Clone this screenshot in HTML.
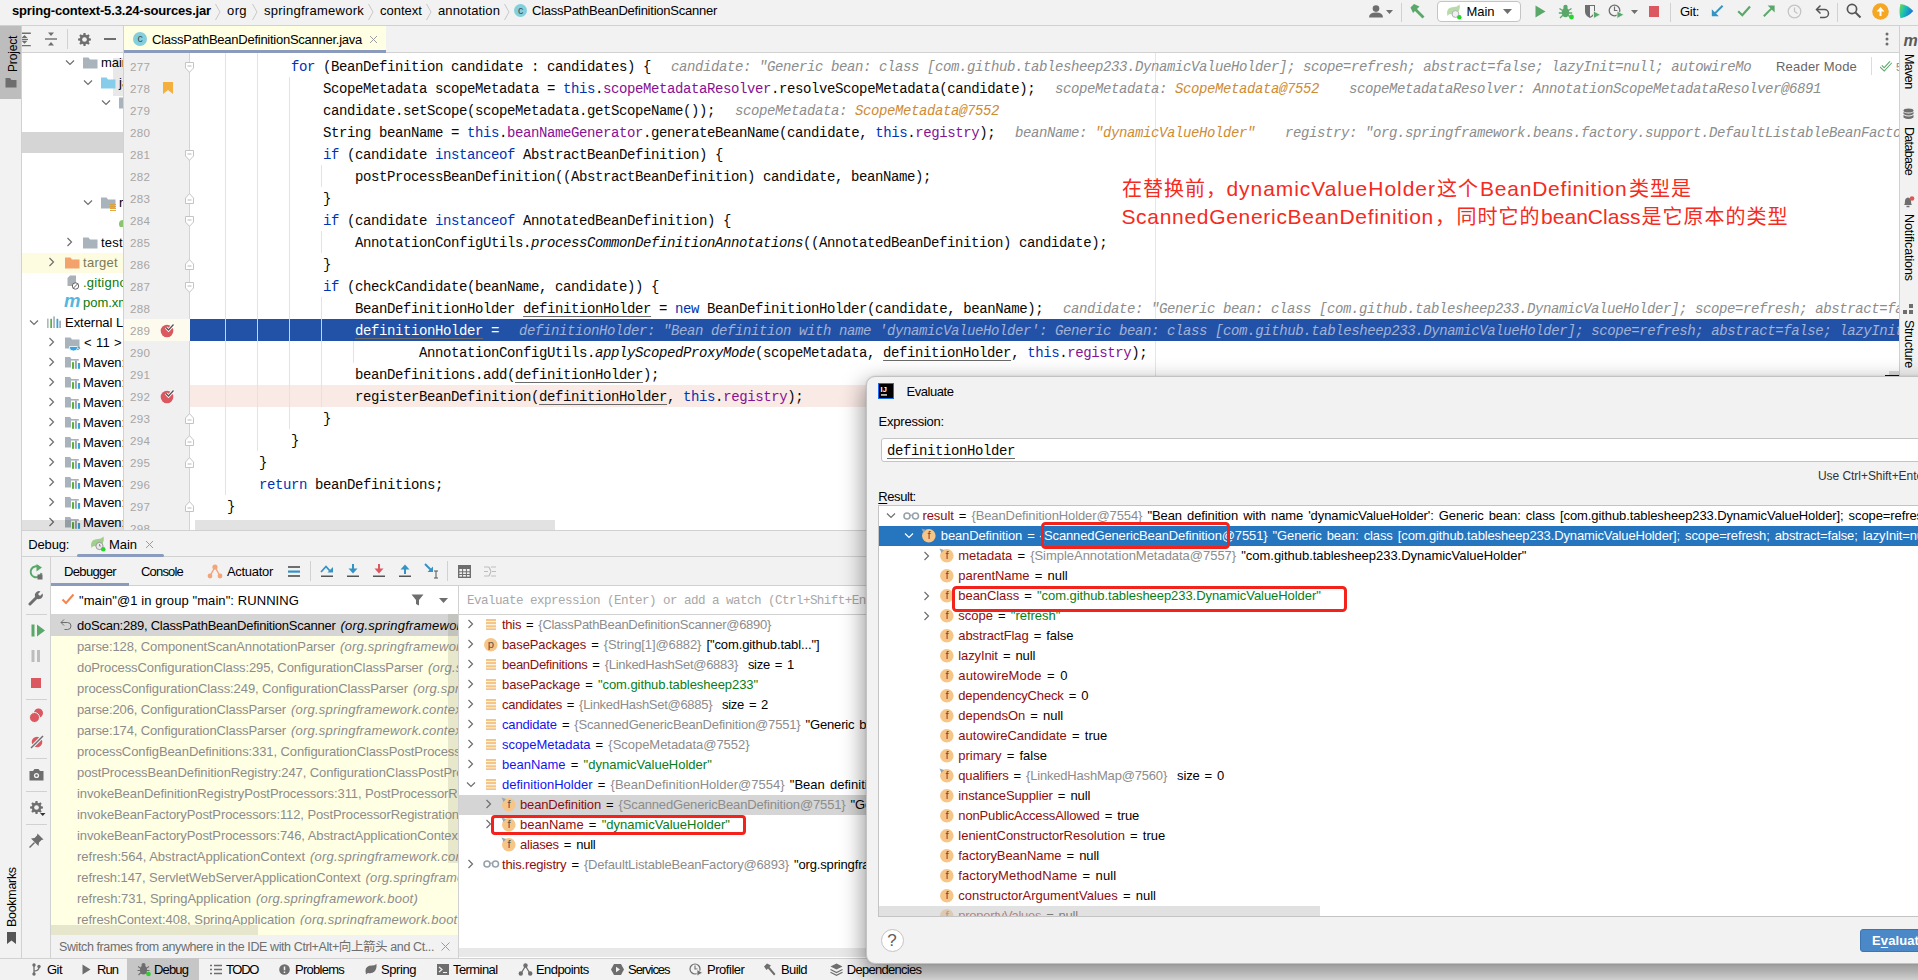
<!DOCTYPE html>
<html><head><meta charset="utf-8"><title>IDE</title>
<style>
html,body{margin:0;padding:0}
body{width:1918px;height:980px;overflow:hidden;position:relative;background:#f2f2f2;font-family:'Liberation Sans','Noto Sans CJK SC',sans-serif;font-size:13px;color:#000}
.t{position:absolute;white-space:pre;overflow:visible}
.b{position:absolute;box-sizing:border-box}
.c{position:absolute;overflow:hidden}
.cd{height:22px;line-height:22px;font-family:'Liberation Mono','Noto Sans CJK SC',monospace;font-size:14px;letter-spacing:-0.4px;color:#080808}
.ln{height:22px;line-height:22px;font-family:'Liberation Sans',sans-serif;font-size:11.6px;letter-spacing:0.25px;color:#a6a6a6}
.k{color:#0033b3}.f{color:#871094}.h{color:#8c8c8c;font-style:italic}.o{color:#cf8b31;font-style:italic}.i{font-style:italic}.u{text-decoration:underline;text-underline-offset:3px;text-decoration-thickness:1px;text-decoration-color:#6a6a6a}
.g{color:#8c8c8c}.n{color:#8d0d0d}.bl{color:#1414f0}.s{color:#067d17}
</style></head><body>
<div class="b" style="left:0px;top:0px;width:1918px;height:26px;background:#f2f2f2;border-bottom:1px solid #d1d1d1;"></div>
<div class="t" style="left:12px;top:1px;height:20px;line-height:20px;font-size:13px;color:#000;font-weight:bold;letter-spacing:-0.166px;">spring-context-5.3.24-sources.jar</div>
<svg class="b" style="left:214px;top:3px;" width="8" height="18" viewBox="0 0 8 18"><path d="M1.5 1 L6 9 L1.5 17" fill="none" stroke="#c8c8c8" stroke-width="1"/></svg>
<svg class="b" style="left:251px;top:3px;" width="8" height="18" viewBox="0 0 8 18"><path d="M1.5 1 L6 9 L1.5 17" fill="none" stroke="#c8c8c8" stroke-width="1"/></svg>
<svg class="b" style="left:367px;top:3px;" width="8" height="18" viewBox="0 0 8 18"><path d="M1.5 1 L6 9 L1.5 17" fill="none" stroke="#c8c8c8" stroke-width="1"/></svg>
<svg class="b" style="left:425px;top:3px;" width="8" height="18" viewBox="0 0 8 18"><path d="M1.5 1 L6 9 L1.5 17" fill="none" stroke="#c8c8c8" stroke-width="1"/></svg>
<svg class="b" style="left:502.5px;top:3px;" width="8" height="18" viewBox="0 0 8 18"><path d="M1.5 1 L6 9 L1.5 17" fill="none" stroke="#c8c8c8" stroke-width="1"/></svg>
<div class="t" style="left:227px;top:1px;height:20px;line-height:20px;font-size:13px;color:#000;letter-spacing:0.401px;">org</div>
<div class="t" style="left:264px;top:1px;height:20px;line-height:20px;font-size:13px;color:#000;letter-spacing:0.260px;">springframework</div>
<div class="t" style="left:380px;top:1px;height:20px;line-height:20px;font-size:13px;color:#000;letter-spacing:0.011px;">context</div>
<div class="t" style="left:438px;top:1px;height:20px;line-height:20px;font-size:13px;color:#000;letter-spacing:0.127px;">annotation</div>
<div class="t" style="left:532px;top:1px;height:20px;line-height:20px;font-size:13px;color:#000;letter-spacing:-0.241px;">ClassPathBeanDefinitionScanner</div>
<svg class="b" style="left:514px;top:4.2px;" width="13" height="13" viewBox="0 0 13 13"><circle cx="6.5" cy="6.5" r="6.5" fill="#84cfdc"/><text x="6.5" y="9.5" font-family="Liberation Sans,sans-serif" font-size="10.5" text-anchor="middle" fill="#3c4a50">c</text></svg>
<div class="b" style="left:0px;top:26px;width:22px;height:933px;background:#f2f2f2;border-right:1px solid #d1d1d1;"></div>
<div class="b" style="left:0px;top:26px;width:21px;height:73px;background:#bdbdbd;"></div>
<div class="t" style="left:0;top:26px;width:21px;height:73px;"><div style="position:absolute;left:2.5px;top:45.5px;transform-origin:0 0;transform:rotate(-90deg);font-size:12px;line-height:21px;width:50px;letter-spacing:-0.15px">Project</div></div>
<svg class="b" style="left:5px;top:77px;" width="12" height="11" viewBox="0 0 12 11"><path d="M0.5 1 H5 L6.5 3 H11.5 V10.5 H0.5 Z" fill="#6e6e6e"/></svg>
<div class="t" style="left:0;top:860px;width:21px;height:80px;"><div style="position:absolute;left:2px;top:67px;transform-origin:0 0;transform:rotate(-90deg);font-size:12.5px;line-height:21px;letter-spacing:-0.3px">Bookmarks</div></div>
<svg class="b" style="left:7px;top:932px;" width="9" height="12" viewBox="0 0 9 12"><path d="M0 0 H9 V12 L4.5 8.5 L0 12 Z" fill="#555"/></svg>
<div class="b" style="left:22px;top:26px;width:102px;height:27px;background:#f2f2f2;border-bottom:1px solid #d1d1d1;"></div>
<div class="b" style="left:22px;top:53px;width:102px;height:477px;background:#fff;"></div>
<svg class="b" style="left:22px;top:31px;" width="10" height="16" viewBox="0 0 10 16"><path d="M0 2.2 H8.8 M0 14.6 H8.8" fill="none" stroke="#6e6e6e" stroke-width="1.4"/><path d="M0 8.4 H6" stroke="#6e6e6e" stroke-width="1.2"/><path d="M-0.5 7 L2.5 4 L5.5 7 Z M-0.5 9.8 L2.5 12.8 L5.5 9.8 Z" fill="#6e6e6e"/></svg>
<svg class="b" style="left:44px;top:31px;" width="14" height="16" viewBox="0 0 14 16"><path d="M1 8 H13" stroke="#6e6e6e" stroke-width="1.4"/><path d="M4 1.5 H10 L7 5 Z M4 14.5 H10 L7 11 Z" fill="#6e6e6e"/></svg>
<div class="b" style="left:67px;top:29px;width:1px;height:20px;background:#d1d1d1;"></div>
<svg class="b" style="left:76.5px;top:31.5px;" width="15" height="15" viewBox="0 0 15 15"><polygon points="13.92,6.46 13.92,8.54 12.16,8.69 11.64,9.95 12.77,11.31 11.31,12.77 9.95,11.64 8.69,12.16 8.54,13.92 6.46,13.92 6.31,12.16 5.05,11.64 3.69,12.77 2.23,11.31 3.36,9.95 2.84,8.69 1.08,8.54 1.08,6.46 2.84,6.31 3.36,5.05 2.23,3.69 3.69,2.23 5.05,3.36 6.31,2.84 6.46,1.08 8.54,1.08 8.69,2.84 9.95,3.36 11.31,2.23 12.77,3.69 11.64,5.05 12.16,6.31" fill="#6e6e6e"/><circle cx="7.5" cy="7.5" r="2.34" fill="#f2f2f2"/></svg>
<div class="b" style="left:104px;top:38px;width:12px;height:2px;background:#6e6e6e;"></div>
<div class="c" style="left:22px;top:53px;width:101px;height:477px">
<div class="b" style="left:0px;top:79px;width:101px;height:21px;background:#d5d5d5;"></div>
<div class="b" style="left:0px;top:200px;width:101px;height:20px;background:#fdfbe0;"></div>
<div class="b" style="left:91px;top:5px;width:10px;height:38px;background:#e8e8e8;"></div>
<svg class="b" style="left:43px;top:5.5px;" width="10" height="7" viewBox="0 0 10 7"><path d="M1 1.5 L5 5.5 L9 1.5" fill="none" stroke="#6e6e6e" stroke-width="1.2"/></svg>
<svg class="b" style="left:61px;top:3.75px;" width="15" height="12" viewBox="0 0 15 12"><path d="M0 0.5 H5.5 L7 2.5 H14.5 V11.5 H0 Z" fill="#a8b3bb"/></svg>
<div class="t" style="left:79px;top:-0.25px;height:20px;line-height:20px;font-size:13px;color:#000;letter-spacing:-0.047px;">main</div>
<svg class="b" style="left:61px;top:25.5px;" width="10" height="7" viewBox="0 0 10 7"><path d="M1 1.5 L5 5.5 L9 1.5" fill="none" stroke="#6e6e6e" stroke-width="1.2"/></svg>
<svg class="b" style="left:79px;top:23.75px;" width="15" height="12" viewBox="0 0 15 12"><path d="M0 0.5 H5.5 L7 2.5 H14.5 V11.5 H0 Z" fill="#87cdea"/></svg>
<div class="t" style="left:97px;top:19.75px;height:20px;line-height:20px;font-size:13px;color:#000;">java</div>
<svg class="b" style="left:79px;top:45.5px;" width="10" height="7" viewBox="0 0 10 7"><path d="M1 1.5 L5 5.5 L9 1.5" fill="none" stroke="#6e6e6e" stroke-width="1.2"/></svg>
<svg class="b" style="left:97px;top:43.75px;" width="15" height="12" viewBox="0 0 15 12"><path d="M0 0.5 H5.5 L7 2.5 H14.5 V11.5 H0 Z" fill="#a8b3bb"/></svg>
<svg class="b" style="left:61px;top:145.5px;" width="10" height="7" viewBox="0 0 10 7"><path d="M1 1.5 L5 5.5 L9 1.5" fill="none" stroke="#6e6e6e" stroke-width="1.2"/></svg>
<svg class="b" style="left:79px;top:143.75px;" width="15" height="12" viewBox="0 0 15 12"><path d="M0 0.5 H5.5 L7 2.5 H14.5 V11.5 H0 Z" fill="#a8b3bb"/></svg>
<svg class="b" style="left:87px;top:150px;" width="8" height="8" viewBox="0 0 8 8"><path d="M1 1.5 H7 M1 3.5 H7 M1 5.5 H7 M1 7.5 H7" stroke="#e0a030" stroke-width="0.9"/></svg>
<div class="t" style="left:97px;top:139.75px;height:20px;line-height:20px;font-size:13px;color:#000;">resources</div>
<svg class="b" style="left:96px;top:166px;" width="8" height="8" viewBox="0 0 8 8"><circle cx="5" cy="5" r="4" fill="#8bc46a"/></svg>
<svg class="b" style="left:44px;top:184px;" width="7" height="10" viewBox="0 0 7 10"><path d="M1.5 1 L5.5 5 L1.5 9" fill="none" stroke="#6e6e6e" stroke-width="1.2"/></svg>
<svg class="b" style="left:61px;top:183.75px;" width="15" height="12" viewBox="0 0 15 12"><path d="M0 0.5 H5.5 L7 2.5 H14.5 V11.5 H0 Z" fill="#a8b3bb"/></svg>
<div class="t" style="left:79px;top:179.75px;height:20px;line-height:20px;font-size:13px;color:#000;letter-spacing:0.258px;">test</div>
<svg class="b" style="left:26px;top:204px;" width="7" height="10" viewBox="0 0 7 10"><path d="M1.5 1 L5.5 5 L1.5 9" fill="none" stroke="#6e6e6e" stroke-width="1.2"/></svg>
<svg class="b" style="left:43px;top:203.75px;" width="15" height="12" viewBox="0 0 15 12"><path d="M0 0.5 H5.5 L7 2.5 H14.5 V11.5 H0 Z" fill="#f4a26c"/></svg>
<div class="t" style="left:61px;top:199.75px;height:20px;line-height:20px;font-size:13px;color:#7a7a55;letter-spacing:0.292px;">target</div>
<svg class="b" style="left:45px;top:222px;" width="13" height="15" viewBox="0 0 13 15"><path d="M3 0.5 H9 V11 H0.5 V3 Z" fill="#aab2b8"/><circle cx="8.5" cy="11" r="3.2" fill="#fff" stroke="#555" stroke-width="0.9"/><path d="M6.3 13.2 L10.7 8.8" stroke="#555" stroke-width="0.9"/></svg>
<div class="t" style="left:61px;top:219.75px;height:20px;line-height:20px;font-size:13px;color:#0a7a0a;letter-spacing:0.252px;">.gitignore</div>
<div class="t" style="left:42px;top:238.25px;height:20px;line-height:20px;font-size:18.5px;color:#52b6de;font-weight:bold;font-style:italic;">m</div>
<div class="t" style="left:61px;top:239.75px;height:20px;line-height:20px;font-size:13px;color:#0a7a0a;letter-spacing:-0.018px;">pom.xml</div>
<svg class="b" style="left:7px;top:265.5px;" width="10" height="7" viewBox="0 0 10 7"><path d="M1 1.5 L5 5.5 L9 1.5" fill="none" stroke="#6e6e6e" stroke-width="1.2"/></svg>
<svg class="b" style="left:25px;top:262.5px;" width="15" height="12.5" viewBox="0 0 15 12.5"><rect x="0.2" y="2.6" width="1.3" height="9.4" fill="#9aa7b0"/><rect x="3.3" y="2.8" width="1.7" height="9.2" fill="#5fad3a"/><rect x="6.3" y="0.4" width="1.5" height="11.6" fill="#9aa7b0"/><rect x="9.5" y="2.8" width="1.8" height="9.2" fill="#35a5dd"/><rect x="12.3" y="4.7" width="1.6" height="7.3" fill="#9aa7b0"/></svg>
<div class="t" style="left:43px;top:259.75px;height:20px;line-height:20px;font-size:13px;color:#000;letter-spacing:-0.036px;">External Libraries</div>
<svg class="b" style="left:26px;top:284px;" width="7" height="10" viewBox="0 0 7 10"><path d="M1.5 1 L5.5 5 L1.5 9" fill="none" stroke="#6e6e6e" stroke-width="1.2"/></svg>
<svg class="b" style="left:43px;top:283.75px;" width="15" height="12" viewBox="0 0 15 12"><path d="M0 0.5 H5.5 L7 2.5 H14.5 V11.5 H0 Z" fill="#a8b3bb"/></svg>
<svg class="b" style="left:46.5px;top:292.5px;" width="12" height="5.5" viewBox="0 0 12 5.5"><path d="M0.5 0.5 H8.5 V2 Q8.5 5 4.5 5 Q0.5 5 0.5 2 Z" fill="#35a5dd" stroke="#fff" stroke-width="0.8"/><path d="M8.5 1.2 Q11.3 1 10.8 2.4 Q10.3 3.6 8 3.4" fill="none" stroke="#35a5dd" stroke-width="1"/></svg>
<div class="t" style="left:62px;top:279.75px;height:20px;line-height:20px;font-size:13px;color:#000;letter-spacing:0.349px;">&lt; 11 &gt;</div>
<svg class="b" style="left:26px;top:304px;" width="7" height="10" viewBox="0 0 7 10"><path d="M1.5 1 L5.5 5 L1.5 9" fill="none" stroke="#6e6e6e" stroke-width="1.2"/></svg>
<svg class="b" style="left:43px;top:303px;" width="16" height="14" viewBox="0 0 16 14"><path d="M0 1 H5 L6.5 3 H13.8 V11.6 H0 Z" fill="#a8b3bb"/><rect x="6" y="4.6" width="10" height="9.4" fill="#fff"/><rect x="7" y="6.2" width="2.1" height="6.6" fill="#5fad3a"/><rect x="10" y="4.6" width="1.9" height="8.2" fill="#9aa7b0"/><rect x="12.9" y="7" width="2.2" height="5.8" fill="#35a5dd"/></svg>
<div class="t" style="left:61px;top:299.75px;height:20px;line-height:20px;font-size:13px;color:#000;letter-spacing:-0.107px;">Maven:</div>
<svg class="b" style="left:26px;top:324px;" width="7" height="10" viewBox="0 0 7 10"><path d="M1.5 1 L5.5 5 L1.5 9" fill="none" stroke="#6e6e6e" stroke-width="1.2"/></svg>
<svg class="b" style="left:43px;top:323px;" width="16" height="14" viewBox="0 0 16 14"><path d="M0 1 H5 L6.5 3 H13.8 V11.6 H0 Z" fill="#a8b3bb"/><rect x="6" y="4.6" width="10" height="9.4" fill="#fff"/><rect x="7" y="6.2" width="2.1" height="6.6" fill="#5fad3a"/><rect x="10" y="4.6" width="1.9" height="8.2" fill="#9aa7b0"/><rect x="12.9" y="7" width="2.2" height="5.8" fill="#35a5dd"/></svg>
<div class="t" style="left:61px;top:319.75px;height:20px;line-height:20px;font-size:13px;color:#000;letter-spacing:-0.107px;">Maven:</div>
<svg class="b" style="left:26px;top:344px;" width="7" height="10" viewBox="0 0 7 10"><path d="M1.5 1 L5.5 5 L1.5 9" fill="none" stroke="#6e6e6e" stroke-width="1.2"/></svg>
<svg class="b" style="left:43px;top:343px;" width="16" height="14" viewBox="0 0 16 14"><path d="M0 1 H5 L6.5 3 H13.8 V11.6 H0 Z" fill="#a8b3bb"/><rect x="6" y="4.6" width="10" height="9.4" fill="#fff"/><rect x="7" y="6.2" width="2.1" height="6.6" fill="#5fad3a"/><rect x="10" y="4.6" width="1.9" height="8.2" fill="#9aa7b0"/><rect x="12.9" y="7" width="2.2" height="5.8" fill="#35a5dd"/></svg>
<div class="t" style="left:61px;top:339.75px;height:20px;line-height:20px;font-size:13px;color:#000;letter-spacing:-0.107px;">Maven:</div>
<svg class="b" style="left:26px;top:364px;" width="7" height="10" viewBox="0 0 7 10"><path d="M1.5 1 L5.5 5 L1.5 9" fill="none" stroke="#6e6e6e" stroke-width="1.2"/></svg>
<svg class="b" style="left:43px;top:363px;" width="16" height="14" viewBox="0 0 16 14"><path d="M0 1 H5 L6.5 3 H13.8 V11.6 H0 Z" fill="#a8b3bb"/><rect x="6" y="4.6" width="10" height="9.4" fill="#fff"/><rect x="7" y="6.2" width="2.1" height="6.6" fill="#5fad3a"/><rect x="10" y="4.6" width="1.9" height="8.2" fill="#9aa7b0"/><rect x="12.9" y="7" width="2.2" height="5.8" fill="#35a5dd"/></svg>
<div class="t" style="left:61px;top:359.75px;height:20px;line-height:20px;font-size:13px;color:#000;letter-spacing:-0.107px;">Maven:</div>
<svg class="b" style="left:26px;top:384px;" width="7" height="10" viewBox="0 0 7 10"><path d="M1.5 1 L5.5 5 L1.5 9" fill="none" stroke="#6e6e6e" stroke-width="1.2"/></svg>
<svg class="b" style="left:43px;top:383px;" width="16" height="14" viewBox="0 0 16 14"><path d="M0 1 H5 L6.5 3 H13.8 V11.6 H0 Z" fill="#a8b3bb"/><rect x="6" y="4.6" width="10" height="9.4" fill="#fff"/><rect x="7" y="6.2" width="2.1" height="6.6" fill="#5fad3a"/><rect x="10" y="4.6" width="1.9" height="8.2" fill="#9aa7b0"/><rect x="12.9" y="7" width="2.2" height="5.8" fill="#35a5dd"/></svg>
<div class="t" style="left:61px;top:379.75px;height:20px;line-height:20px;font-size:13px;color:#000;letter-spacing:-0.107px;">Maven:</div>
<svg class="b" style="left:26px;top:404px;" width="7" height="10" viewBox="0 0 7 10"><path d="M1.5 1 L5.5 5 L1.5 9" fill="none" stroke="#6e6e6e" stroke-width="1.2"/></svg>
<svg class="b" style="left:43px;top:403px;" width="16" height="14" viewBox="0 0 16 14"><path d="M0 1 H5 L6.5 3 H13.8 V11.6 H0 Z" fill="#a8b3bb"/><rect x="6" y="4.6" width="10" height="9.4" fill="#fff"/><rect x="7" y="6.2" width="2.1" height="6.6" fill="#5fad3a"/><rect x="10" y="4.6" width="1.9" height="8.2" fill="#9aa7b0"/><rect x="12.9" y="7" width="2.2" height="5.8" fill="#35a5dd"/></svg>
<div class="t" style="left:61px;top:399.75px;height:20px;line-height:20px;font-size:13px;color:#000;letter-spacing:-0.107px;">Maven:</div>
<svg class="b" style="left:26px;top:424px;" width="7" height="10" viewBox="0 0 7 10"><path d="M1.5 1 L5.5 5 L1.5 9" fill="none" stroke="#6e6e6e" stroke-width="1.2"/></svg>
<svg class="b" style="left:43px;top:423px;" width="16" height="14" viewBox="0 0 16 14"><path d="M0 1 H5 L6.5 3 H13.8 V11.6 H0 Z" fill="#a8b3bb"/><rect x="6" y="4.6" width="10" height="9.4" fill="#fff"/><rect x="7" y="6.2" width="2.1" height="6.6" fill="#5fad3a"/><rect x="10" y="4.6" width="1.9" height="8.2" fill="#9aa7b0"/><rect x="12.9" y="7" width="2.2" height="5.8" fill="#35a5dd"/></svg>
<div class="t" style="left:61px;top:419.75px;height:20px;line-height:20px;font-size:13px;color:#000;letter-spacing:-0.107px;">Maven:</div>
<svg class="b" style="left:26px;top:444px;" width="7" height="10" viewBox="0 0 7 10"><path d="M1.5 1 L5.5 5 L1.5 9" fill="none" stroke="#6e6e6e" stroke-width="1.2"/></svg>
<svg class="b" style="left:43px;top:443px;" width="16" height="14" viewBox="0 0 16 14"><path d="M0 1 H5 L6.5 3 H13.8 V11.6 H0 Z" fill="#a8b3bb"/><rect x="6" y="4.6" width="10" height="9.4" fill="#fff"/><rect x="7" y="6.2" width="2.1" height="6.6" fill="#5fad3a"/><rect x="10" y="4.6" width="1.9" height="8.2" fill="#9aa7b0"/><rect x="12.9" y="7" width="2.2" height="5.8" fill="#35a5dd"/></svg>
<div class="t" style="left:61px;top:439.75px;height:20px;line-height:20px;font-size:13px;color:#000;letter-spacing:-0.107px;">Maven:</div>
<svg class="b" style="left:26px;top:464px;" width="7" height="10" viewBox="0 0 7 10"><path d="M1.5 1 L5.5 5 L1.5 9" fill="none" stroke="#6e6e6e" stroke-width="1.2"/></svg>
<svg class="b" style="left:43px;top:463px;" width="16" height="14" viewBox="0 0 16 14"><path d="M0 1 H5 L6.5 3 H13.8 V11.6 H0 Z" fill="#a8b3bb"/><rect x="6" y="4.6" width="10" height="9.4" fill="#fff"/><rect x="7" y="6.2" width="2.1" height="6.6" fill="#5fad3a"/><rect x="10" y="4.6" width="1.9" height="8.2" fill="#9aa7b0"/><rect x="12.9" y="7" width="2.2" height="5.8" fill="#35a5dd"/></svg>
<div class="t" style="left:61px;top:459.75px;height:20px;line-height:20px;font-size:13px;color:#000;letter-spacing:-0.107px;">Maven:</div>
<div class="b" style="left:0px;top:467px;width:101px;height:10.5px;background:rgba(0,0,0,0.12);"></div>
</div>
<div class="b" style="left:123px;top:26px;width:1px;height:504px;background:#d1d1d1;"></div>
<div class="b" style="left:124px;top:26px;width:1775px;height:27px;background:#f2f2f2;border-bottom:1px solid #d1d1d1;"></div>
<div class="b" style="left:124px;top:26px;width:262px;height:24px;background:#ffffe4;"></div>
<div class="b" style="left:124px;top:50px;width:262px;height:3px;background:#8b9bbd;"></div>
<svg class="b" style="left:133px;top:32px;" width="14" height="14" viewBox="0 0 14 14"><circle cx="7" cy="7" r="7" fill="#84cfdc"/><text x="7" y="10" font-family="Liberation Sans,sans-serif" font-size="10.5" text-anchor="middle" fill="#3c4a50">c</text></svg>
<div class="t" style="left:152px;top:29.75px;height:20px;line-height:20px;font-size:13px;color:#000;letter-spacing:-0.256px;">ClassPathBeanDefinitionScanner.java</div>
<svg class="b" style="left:369px;top:35px;" width="9" height="9" viewBox="0 0 9 9"><path d="M1 1 L8 8 M8 1 L1 8" stroke="#9b9b9b" stroke-width="1"/></svg>
<svg class="b" style="left:1885px;top:32px;" width="4" height="14" viewBox="0 0 4 14"><circle cx="2" cy="2" r="1.5" fill="#6e6e6e"/><circle cx="2" cy="7" r="1.5" fill="#6e6e6e"/><circle cx="2" cy="12" r="1.5" fill="#6e6e6e"/></svg>
<div class="c" style="left:124px;top:53px;width:1775px;height:477px;background:#fff">
<div class="b" style="left:0px;top:0px;width:66px;height:477px;background:#f0f0f0;"></div>
<div class="b" style="left:65px;top:0px;width:1px;height:477px;background:#d4d4d4;"></div>
<div class="b" style="left:1031px;top:0px;width:1px;height:477px;background:#e6e6e6;"></div>
<div class="b" style="left:0px;top:266px;width:66px;height:22px;background:#fdfbee;"></div>
<div class="b" style="left:66px;top:266px;width:1709px;height:22px;background:#2252a8;"></div>
<div class="b" style="left:66px;top:332px;width:1709px;height:22px;background:#faeae6;"></div>
<div class="b" style="left:101px;top:0px;width:1px;height:442px;background:#e3e3e3;"></div>
<div class="b" style="left:133px;top:0px;width:1px;height:398px;background:#e3e3e3;"></div>
<div class="b" style="left:165px;top:24px;width:1px;height:352px;background:#e3e3e3;"></div>
<div class="b" style="left:197px;top:112px;width:1px;height:242px;background:#e3e3e3;"></div>
<div class="b" style="left:197px;top:178px;width:1px;height:22px;background:#e3e3e3;"></div>
<div class="b" style="left:229px;top:288px;width:1px;height:22px;background:#e3e3e3;"></div>
<div class="b" style="left:101px;top:266px;width:1px;height:22px;background:#c9d3e8;"></div>
<div class="b" style="left:133px;top:266px;width:1px;height:22px;background:#c9d3e8;"></div>
<div class="b" style="left:165px;top:266px;width:1px;height:22px;background:#c9d3e8;"></div>
<div class="b" style="left:197px;top:266px;width:1px;height:22px;background:#c9d3e8;"></div>
<div class="b" style="left:197px;top:134px;width:1px;height:22px;background:#fff;"></div>
<div class="b" style="left:197px;top:156px;width:1px;height:22px;background:#fff;"></div>
<div class="b" style="left:197px;top:200px;width:1px;height:22px;background:#fff;"></div>
<div class="b" style="left:197px;top:222px;width:1px;height:22px;background:#fff;"></div>
<div class="t cd" style="left:167px;top:3px;"><span class="k">for</span> (BeanDefinition candidate : candidates) {</div>
<div class="t cd h" style="left:547px;top:3px;">candidate: "Generic bean: class [com.github.tablesheep233.DynamicValueHolder]; scope=refresh; abstract=false; lazyInit=null; autowireMo</div>
<div class="t cd" style="left:199px;top:25px;">ScopeMetadata scopeMetadata = <span class="k">this</span>.<span class="f">scopeMetadataResolver</span>.resolveScopeMetadata(candidate);</div>
<div class="t cd h" style="left:931px;top:25px;">scopeMetadata: <span class="o">ScopeMetadata@7552</span></div>
<div class="t cd h" style="left:1225px;top:25px;">scopeMetadataResolver: AnnotationScopeMetadataResolver@6891</div>
<div class="t cd" style="left:199px;top:47px;">candidate.setScope(scopeMetadata.getScopeName());</div>
<div class="t cd h" style="left:611px;top:47px;">scopeMetadata: <span class="o">ScopeMetadata@7552</span></div>
<div class="t cd" style="left:199px;top:69px;">String beanName = <span class="k">this</span>.<span class="f">beanNameGenerator</span>.generateBeanName(candidate, <span class="k">this</span>.<span class="f">registry</span>);</div>
<div class="t cd h" style="left:891px;top:69px;">beanName: <span class="o">"dynamicValueHolder"</span></div>
<div class="t cd h" style="left:1161px;top:69px;">registry: "org.springframework.beans.factory.support.DefaultListableBeanFactory@6893</div>
<div class="t cd" style="left:199px;top:91px;"><span class="k">if</span> (candidate <span class="k">instanceof</span> AbstractBeanDefinition) {</div>
<div class="t cd" style="left:231px;top:113px;">postProcessBeanDefinition((AbstractBeanDefinition) candidate, beanName);</div>
<div class="t cd" style="left:199px;top:135px;">}</div>
<div class="t cd" style="left:199px;top:157px;"><span class="k">if</span> (candidate <span class="k">instanceof</span> AnnotatedBeanDefinition) {</div>
<div class="t cd" style="left:231px;top:179px;">AnnotationConfigUtils.<span class="i">processCommonDefinitionAnnotations</span>((AnnotatedBeanDefinition) candidate);</div>
<div class="t cd" style="left:199px;top:201px;">}</div>
<div class="t cd" style="left:199px;top:223px;"><span class="k">if</span> (checkCandidate(beanName, candidate)) {</div>
<div class="t cd" style="left:231px;top:245px;">BeanDefinitionHolder <span class="u">definitionHolder</span> = <span class="k">new</span> BeanDefinitionHolder(candidate, beanName);</div>
<div class="t cd h" style="left:939px;top:245px;">candidate: "Generic bean: class [com.github.tablesheep233.DynamicValueHolder]; scope=refresh; abstract=false; lazyInit=null</div>
<div class="t cd" style="left:231px;top:267px;"><span style="color:#fff"><span class="u">definitionHolder</span> =</span></div>
<div class="t cd h" style="left:395px;top:267px;"><span style="color:#a3b3d6">definitionHolder: "Bean definition with name 'dynamicValueHolder': Generic bean: class [com.github.tablesheep233.DynamicValueHolder]; scope=refresh; abstract=false; lazyInit=null; autowireMode=0</span></div>
<div class="t cd" style="left:295px;top:289px;">AnnotationConfigUtils.<span class="i">applyScopedProxyMode</span>(scopeMetadata, <span class="u">definitionHolder</span>, <span class="k">this</span>.<span class="f">registry</span>);</div>
<div class="t cd" style="left:231px;top:311px;">beanDefinitions.add(<span class="u">definitionHolder</span>);</div>
<div class="t cd" style="left:231px;top:333px;">registerBeanDefinition(<span class="u">definitionHolder</span>, <span class="k">this</span>.<span class="f">registry</span>);</div>
<div class="t cd" style="left:199px;top:355px;">}</div>
<div class="t cd" style="left:167px;top:377px;">}</div>
<div class="t cd" style="left:135px;top:399px;">}</div>
<div class="t cd" style="left:135px;top:421px;"><span class="k">return</span> beanDefinitions;</div>
<div class="t cd" style="left:103px;top:443px;">}</div>
<div class="t ln" style="left:6px;top:3px;">277</div>
<div class="t ln" style="left:6px;top:25px;">278</div>
<div class="t ln" style="left:6px;top:47px;">279</div>
<div class="t ln" style="left:6px;top:69px;">280</div>
<div class="t ln" style="left:6px;top:91px;">281</div>
<div class="t ln" style="left:6px;top:113px;">282</div>
<div class="t ln" style="left:6px;top:135px;">283</div>
<div class="t ln" style="left:6px;top:157px;">284</div>
<div class="t ln" style="left:6px;top:179px;">285</div>
<div class="t ln" style="left:6px;top:201px;">286</div>
<div class="t ln" style="left:6px;top:223px;">287</div>
<div class="t ln" style="left:6px;top:245px;">288</div>
<div class="t ln" style="left:6px;top:267px;">289</div>
<div class="t ln" style="left:6px;top:289px;">290</div>
<div class="t ln" style="left:6px;top:311px;">291</div>
<div class="t ln" style="left:6px;top:333px;">292</div>
<div class="t ln" style="left:6px;top:355px;">293</div>
<div class="t ln" style="left:6px;top:377px;">294</div>
<div class="t ln" style="left:6px;top:399px;">295</div>
<div class="t ln" style="left:6px;top:421px;">296</div>
<div class="t ln" style="left:6px;top:443px;">297</div>
<div class="t ln" style="left:6px;top:465px;">298</div>
<svg class="b" style="left:61px;top:9px;" width="9" height="11" viewBox="0 0 9 11"><path d="M0.5 0.5 H8.5 V6 L4.5 10.3 L0.5 6 Z" fill="#fff" stroke="#c4c4c4" stroke-width="1"/><path d="M2.5 4 H6.5" stroke="#b8b8b8" stroke-width="1"/></svg>
<svg class="b" style="left:61px;top:97px;" width="9" height="11" viewBox="0 0 9 11"><path d="M0.5 0.5 H8.5 V6 L4.5 10.3 L0.5 6 Z" fill="#fff" stroke="#c4c4c4" stroke-width="1"/><path d="M2.5 4 H6.5" stroke="#b8b8b8" stroke-width="1"/></svg>
<svg class="b" style="left:61px;top:163px;" width="9" height="11" viewBox="0 0 9 11"><path d="M0.5 0.5 H8.5 V6 L4.5 10.3 L0.5 6 Z" fill="#fff" stroke="#c4c4c4" stroke-width="1"/><path d="M2.5 4 H6.5" stroke="#b8b8b8" stroke-width="1"/></svg>
<svg class="b" style="left:61px;top:229px;" width="9" height="11" viewBox="0 0 9 11"><path d="M0.5 0.5 H8.5 V6 L4.5 10.3 L0.5 6 Z" fill="#fff" stroke="#c4c4c4" stroke-width="1"/><path d="M2.5 4 H6.5" stroke="#b8b8b8" stroke-width="1"/></svg>
<svg class="b" style="left:61px;top:139.5px;" width="9" height="11" viewBox="0 0 9 11"><path d="M0.5 10.5 H8.5 V5 L4.5 0.7 L0.5 5 Z" fill="#fff" stroke="#c4c4c4" stroke-width="1"/><path d="M2.5 7 H6.5" stroke="#b8b8b8" stroke-width="1"/></svg>
<svg class="b" style="left:61px;top:205.5px;" width="9" height="11" viewBox="0 0 9 11"><path d="M0.5 10.5 H8.5 V5 L4.5 0.7 L0.5 5 Z" fill="#fff" stroke="#c4c4c4" stroke-width="1"/><path d="M2.5 7 H6.5" stroke="#b8b8b8" stroke-width="1"/></svg>
<svg class="b" style="left:61px;top:359.5px;" width="9" height="11" viewBox="0 0 9 11"><path d="M0.5 10.5 H8.5 V5 L4.5 0.7 L0.5 5 Z" fill="#fff" stroke="#c4c4c4" stroke-width="1"/><path d="M2.5 7 H6.5" stroke="#b8b8b8" stroke-width="1"/></svg>
<svg class="b" style="left:61px;top:381.5px;" width="9" height="11" viewBox="0 0 9 11"><path d="M0.5 10.5 H8.5 V5 L4.5 0.7 L0.5 5 Z" fill="#fff" stroke="#c4c4c4" stroke-width="1"/><path d="M2.5 7 H6.5" stroke="#b8b8b8" stroke-width="1"/></svg>
<svg class="b" style="left:61px;top:403.5px;" width="9" height="11" viewBox="0 0 9 11"><path d="M0.5 10.5 H8.5 V5 L4.5 0.7 L0.5 5 Z" fill="#fff" stroke="#c4c4c4" stroke-width="1"/><path d="M2.5 7 H6.5" stroke="#b8b8b8" stroke-width="1"/></svg>
<svg class="b" style="left:61px;top:447.5px;" width="9" height="11" viewBox="0 0 9 11"><path d="M0.5 10.5 H8.5 V5 L4.5 0.7 L0.5 5 Z" fill="#fff" stroke="#c4c4c4" stroke-width="1"/><path d="M2.5 7 H6.5" stroke="#b8b8b8" stroke-width="1"/></svg>
<svg class="b" style="left:39px;top:29px;" width="10" height="12" viewBox="0 0 10 12"><path d="M0 0 H10 V12 L5 8 L0 12 Z" fill="#f5af3d"/></svg>
<svg class="b" style="left:36px;top:269px;" width="16" height="16" viewBox="0 0 16 16"><circle cx="7" cy="9" r="6.3" fill="#db5860"/><path d="M6 5.5 L8.5 8 L13.5 2.5" fill="none" stroke="#fff" stroke-width="3"/><path d="M6 5.5 L8.5 8 L13.5 2.5" fill="none" stroke="#555" stroke-width="1.3"/></svg>
<svg class="b" style="left:36px;top:335px;" width="16" height="16" viewBox="0 0 16 16"><circle cx="7" cy="9" r="6.3" fill="#db5860"/><path d="M6 5.5 L8.5 8 L13.5 2.5" fill="none" stroke="#fff" stroke-width="3"/><path d="M6 5.5 L8.5 8 L13.5 2.5" fill="none" stroke="#555" stroke-width="1.3"/></svg>
<div class="b" style="left:1634px;top:2px;width:132px;height:22px;background:#fff;"></div>
<div class="t" style="left:1652px;top:3.75px;height:20px;line-height:20px;font-size:13px;color:#666;letter-spacing:0.202px;">Reader Mode</div>
<div class="b" style="left:1747px;top:4px;width:1px;height:18px;background:#dcdcdc;"></div>
<svg class="b" style="left:1755px;top:7px;" width="14" height="12" viewBox="0 0 14 12"><path d="M2 6.2 L5.2 9.4 L11.8 2.2" fill="none" stroke="#59a869" stroke-width="3.4"/><path d="M2 6.2 L5.2 9.4 L11.8 2.2" fill="none" stroke="#fff" stroke-width="1.3"/></svg>
<div class="t" style="left:1772px;top:3.75px;height:20px;line-height:20px;font-size:11px;color:#8a8a8a;">5</div>
<div class="t" style="left:997.9px;top:121.75px;height:28px;line-height:28px;font-size:20px;color:#f52a20;letter-spacing:1px;">在替换前，</div>
<div class="t" style="left:1102.4px;top:121.75px;height:28px;line-height:28px;font-size:21px;color:#f52a20;letter-spacing:0.960px;">dynamicValueHolder</div>
<div class="t" style="left:1313px;top:121.75px;height:28px;line-height:28px;font-size:20px;color:#f52a20;letter-spacing:1px;">这个</div>
<div class="t" style="left:1356px;top:121.75px;height:28px;line-height:28px;font-size:21px;color:#f52a20;letter-spacing:0.779px;">BeanDefinition</div>
<div class="t" style="left:1505px;top:121.75px;height:28px;line-height:28px;font-size:20px;color:#f52a20;letter-spacing:1px;">类型是</div>
<div class="t" style="left:997.4px;top:149.75px;height:28px;line-height:28px;font-size:21px;color:#f52a20;letter-spacing:0.699px;">ScannedGenericBeanDefinition</div>
<div class="t" style="left:1311px;top:149.75px;height:28px;line-height:28px;font-size:20px;color:#f52a20;letter-spacing:1px;">，</div>
<div class="t" style="left:1332.5px;top:149.75px;height:28px;line-height:28px;font-size:20px;color:#f52a20;letter-spacing:1px;">同时它的</div>
<div class="t" style="left:1417px;top:149.75px;height:28px;line-height:28px;font-size:21px;color:#f52a20;letter-spacing:0.030px;">beanClass</div>
<div class="t" style="left:1517.5px;top:149.75px;height:28px;line-height:28px;font-size:20px;color:#f52a20;letter-spacing:1px;">是它原本的类型</div>
</div>
<div class="b" style="left:195px;top:520px;width:360px;height:10.5px;background:rgba(0,0,0,0.115);"></div>
<div class="b" style="left:1899px;top:26px;width:19px;height:933px;background:#f2f2f2;border-left:1px solid #d1d1d1;"></div>
<div class="t" style="left:1903.5px;top:31.25px;height:20px;line-height:20px;font-size:16px;color:#5a5a5a;font-weight:bold;font-style:italic;">m</div>
<div class="t" style="left:1917.5px;top:53.5px;transform-origin:0 0;transform:rotate(90deg);font-size:12.5px;line-height:19px;height:19px;letter-spacing:-0.606px">Maven</div>
<svg class="b" style="left:1903px;top:108px;" width="11" height="12" viewBox="0 0 11 12"><ellipse cx="5.5" cy="2.5" rx="5" ry="2" fill="#6e6e6e"/><path d="M0.5 4 Q5.5 7 10.5 4 V6 Q5.5 9 0.5 6 Z M0.5 7 Q5.5 10 10.5 7 V9.5 Q5.5 12.5 0.5 9.5 Z" fill="#6e6e6e"/></svg>
<div class="t" style="left:1917.5px;top:126.5px;transform-origin:0 0;transform:rotate(90deg);font-size:12.5px;line-height:19px;height:19px;letter-spacing:-0.689px">Database</div>
<svg class="b" style="left:1902px;top:196px;" width="13" height="13" viewBox="0 0 13 13"><path d="M2 9 Q3 8 3 5 Q3 2 6 1.5 Q9 2 9 5 Q9 8 10 9 Z" fill="#6e6e6e"/><path d="M4.5 10.5 H7.5" stroke="#6e6e6e" stroke-width="1.5"/><circle cx="10" cy="2.5" r="2.3" fill="#e05555"/></svg>
<div class="t" style="left:1917.5px;top:214px;transform-origin:0 0;transform:rotate(90deg);font-size:12.5px;line-height:19px;height:19px;letter-spacing:-0.084px">Notifications</div>
<svg class="b" style="left:1903px;top:304px;" width="11" height="11" viewBox="0 0 11 11"><rect x="6" y="0" width="4" height="4" fill="#6e6e6e"/><rect x="0" y="6" width="4" height="4" fill="#6e6e6e"/><rect x="6" y="6" width="4" height="4" fill="#6e6e6e"/></svg>
<div class="t" style="left:1917.5px;top:320px;transform-origin:0 0;transform:rotate(90deg);font-size:12.5px;line-height:19px;height:19px;letter-spacing:-0.302px">Structure</div>
<div class="b" style="left:22px;top:530px;width:1877px;height:1px;background:#d1d1d1;"></div>
<div class="b" style="left:22px;top:531px;width:1877px;height:26px;background:#f2f2f2;border-bottom:1px solid #d1d1d1;"></div>
<div class="t" style="left:28.3px;top:535.25px;height:20px;line-height:20px;font-size:13px;color:#000;letter-spacing:-0.154px;">Debug:</div>
<div class="b" style="left:77px;top:554px;width:87px;height:3px;background:#8b9bbd;border-radius:1.5px;"></div>
<div class="t" style="left:109px;top:535.25px;height:20px;line-height:20px;font-size:13px;color:#000;letter-spacing:-0.047px;">Main</div>
<svg class="b" style="left:145px;top:540px;" width="9" height="9" viewBox="0 0 9 9"><path d="M1 1 L8 8 M8 1 L1 8" stroke="#9b9b9b" stroke-width="1"/></svg>
<svg class="b" style="left:90px;top:536px;" width="17" height="16" viewBox="0 0 17 16"><path d="M1 9 Q1 3 8 3 Q11 3 13.5 0.5 Q14.5 5 12 8 Q9 11 4 10 Q2.5 10.5 1.5 12 Z" fill="#9fcf8b"/><circle cx="9.5" cy="10" r="3.6" fill="#e8e8e8" stroke="#9b9b9b" stroke-width="1"/><path d="M9.5 8 V10 H11" stroke="#8a8a8a" stroke-width="0.9" fill="none"/><circle cx="13.2" cy="13.2" r="2.3" fill="#2bd42b"/></svg>
<div class="b" style="left:22px;top:557px;width:29px;height:402px;background:#f2f2f2;border-right:1px solid #d1d1d1;"></div>
<div class="b" style="left:26px;top:614px;width:21px;height:1px;background:#d1d1d1;"></div>
<div class="b" style="left:26px;top:699px;width:21px;height:1px;background:#d1d1d1;"></div>
<div class="b" style="left:26px;top:758px;width:21px;height:1px;background:#d1d1d1;"></div>
<div class="b" style="left:26px;top:791px;width:21px;height:1px;background:#d1d1d1;"></div>
<div class="b" style="left:26px;top:824px;width:21px;height:1px;background:#d1d1d1;"></div>
<svg class="b" style="left:28px;top:564px;" width="16" height="16" viewBox="0 0 16 16"><path d="M11.5 3.5 A5.5 5.5 0 1 0 13.5 9" fill="none" stroke="#59a869" stroke-width="2"/><path d="M8.5 0 L14 3.5 L8.5 7.5 Z" fill="#59a869"/><rect x="9.5" y="10.5" width="5" height="5" fill="#6e6e6e"/></svg>
<svg class="b" style="left:28px;top:590px;" width="16" height="16" viewBox="0 0 16 16"><path d="M2 14 L9 7" stroke="#6e6e6e" stroke-width="3" stroke-linecap="round"/><path d="M14.5 3.5 L12 6 L10 4 L12.5 1.5 A4 4 0 1 0 14.5 3.5 Z" fill="#6e6e6e"/></svg>
<svg class="b" style="left:30.5px;top:624px;" width="15" height="13" viewBox="0 0 15 13"><rect x="0.5" y="0.5" width="3" height="12" fill="#59a869"/><path d="M6 0.5 L14 6.5 L6 12.5 Z" fill="#59a869"/></svg>
<svg class="b" style="left:31px;top:650px;" width="10" height="12" viewBox="0 0 10 12"><rect x="0.5" y="0" width="3" height="12" fill="#bdbdbd"/><rect x="6" y="0" width="3" height="12" fill="#bdbdbd"/></svg>
<div class="b" style="left:31px;top:678px;width:10px;height:10px;background:#db5860;"></div>
<svg class="b" style="left:29px;top:708px;" width="15" height="15" viewBox="0 0 15 15"><circle cx="9.5" cy="5" r="4.5" fill="#db5860"/><circle cx="5.5" cy="9.5" r="5" fill="#db5860" stroke="#f2f2f2" stroke-width="1"/></svg>
<svg class="b" style="left:29.5px;top:735px;" width="14" height="14" viewBox="0 0 14 14"><circle cx="7" cy="7" r="5.3" fill="#db5860"/><path d="M1 13 L13 1" stroke="#f2f2f2" stroke-width="3.6"/><path d="M1 13 L13 1" stroke="#6e6e6e" stroke-width="1.5"/></svg>
<svg class="b" style="left:29px;top:768px;" width="15" height="13" viewBox="0 0 15 13"><path d="M0.5 3 H4 L5.5 1 H9.5 L11 3 H14.5 V12.5 H0.5 Z" fill="#6e6e6e"/><circle cx="7.5" cy="7.5" r="2.6" fill="#f2f2f2"/><circle cx="7.5" cy="7.5" r="1.2" fill="#6e6e6e"/></svg>
<svg class="b" style="left:28.5px;top:800px;" width="15" height="15" viewBox="0 0 15 15"><polygon points="13.92,6.46 13.92,8.54 12.16,8.69 11.64,9.95 12.77,11.31 11.31,12.77 9.95,11.64 8.69,12.16 8.54,13.92 6.46,13.92 6.31,12.16 5.05,11.64 3.69,12.77 2.23,11.31 3.36,9.95 2.84,8.69 1.08,8.54 1.08,6.46 2.84,6.31 3.36,5.05 2.23,3.69 3.69,2.23 5.05,3.36 6.31,2.84 6.46,1.08 8.54,1.08 8.69,2.84 9.95,3.36 11.31,2.23 12.77,3.69 11.64,5.05 12.16,6.31" fill="#6e6e6e"/><circle cx="7.5" cy="7.5" r="2.34" fill="#f2f2f2"/></svg>
<svg class="b" style="left:40px;top:813px;" width="5.5" height="3" viewBox="0 0 5.5 3"><path d="M0 0 H5.5 L2.75 3 Z" fill="#333"/></svg>
<svg class="b" style="left:29px;top:833px;" width="15" height="15" viewBox="0 0 15 15"><path d="M8.5 0.5 L14.5 6.5 L12.5 7 L10 9.5 L9.5 13 L2 5.5 L5.5 5 L8 2.5 Z" fill="#6e6e6e"/><path d="M5.5 9.5 L0.5 14.5" stroke="#6e6e6e" stroke-width="1.5"/></svg>
<div class="b" style="left:51px;top:557px;width:1848px;height:29px;background:#f2f2f2;border-bottom:1px solid #d1d1d1;"></div>
<div class="t" style="left:64px;top:562.25px;height:20px;line-height:20px;font-size:13px;color:#000;letter-spacing:-0.639px;">Debugger</div>
<div class="b" style="left:51px;top:583px;width:78px;height:3px;background:#8b9bbd;"></div>
<div class="t" style="left:141px;top:562.25px;height:20px;line-height:20px;font-size:13px;color:#000;letter-spacing:-0.815px;">Console</div>
<svg class="b" style="left:207px;top:564px;" width="16" height="15" viewBox="0 0 16 15"><path d="M8 3 L3 12 M8 3 L13 12" stroke="#f2a57a" stroke-width="1.5"/><circle cx="8" cy="3" r="2.6" fill="#f2a57a"/><circle cx="3" cy="12" r="2.4" fill="#f2a57a"/><circle cx="13" cy="12" r="2.4" fill="#f2a57a"/></svg>
<div class="t" style="left:227px;top:562.25px;height:20px;line-height:20px;font-size:13px;color:#000;letter-spacing:-0.303px;">Actuator</div>
<svg class="b" style="left:288px;top:566px;" width="12" height="11" viewBox="0 0 12 11"><rect x="0" y="0" width="12" height="2" fill="#6e6e6e"/><rect x="0" y="4.5" width="12" height="2.2" fill="#3592c4"/><rect x="0" y="9" width="12" height="2" fill="#6e6e6e"/></svg>
<div class="b" style="left:310px;top:561px;width:1px;height:20px;background:#d1d1d1;"></div>
<svg class="b" style="left:320px;top:564px;" width="14" height="14" viewBox="0 0 14 14"><path d="M1 8 L6 2.5 L10 7" fill="none" stroke="#3592c4" stroke-width="1.8"/><path d="M7.5 8.5 H13 V3 Z" fill="#3592c4"/><rect x="1" y="11.5" width="12" height="1.5" fill="#555"/></svg>
<svg class="b" style="left:346px;top:564px;" width="14" height="14" viewBox="0 0 14 14"><path d="M7 0 V6" stroke="#3592c4" stroke-width="2"/><path d="M2.5 4.5 H11.5 L7 9.5 Z" fill="#3592c4"/><rect x="1" y="11.5" width="12" height="1.5" fill="#555"/></svg>
<svg class="b" style="left:372px;top:564px;" width="14" height="14" viewBox="0 0 14 14"><path d="M7 0 V6" stroke="#db5860" stroke-width="2"/><path d="M2.5 4.5 H11.5 L7 9.5 Z" fill="#db5860"/><rect x="1" y="11.5" width="12" height="1.5" fill="#555"/></svg>
<svg class="b" style="left:398px;top:564px;" width="14" height="14" viewBox="0 0 14 14"><path d="M7 4 V10" stroke="#3592c4" stroke-width="2"/><path d="M2.5 5.5 H11.5 L7 0.5 Z" fill="#3592c4"/><rect x="1" y="11.5" width="12" height="1.5" fill="#555"/></svg>
<svg class="b" style="left:424px;top:563px;" width="16" height="16" viewBox="0 0 16 16"><path d="M1 1 L7 7" stroke="#3592c4" stroke-width="2"/><path d="M3.5 9 H9 V3.5 Z" fill="#3592c4"/><path d="M10 8 H14 M12 8 V15 M10 15 H14" stroke="#555" stroke-width="1" fill="none"/></svg>
<div class="b" style="left:447px;top:561px;width:1px;height:20px;background:#d1d1d1;"></div>
<svg class="b" style="left:458px;top:565px;" width="13" height="13" viewBox="0 0 13 13"><rect x="0.7" y="0.7" width="11.6" height="11.6" fill="none" stroke="#6e6e6e" stroke-width="1.4"/><rect x="1" y="1" width="11" height="3" fill="#6e6e6e"/><path d="M4.6 4 V12 M8.4 4 V12 M1 6.8 H12 M1 9.5 H12" stroke="#6e6e6e" stroke-width="1"/></svg>
<svg class="b" style="left:484px;top:566px;" width="12" height="11" viewBox="0 0 12 11"><path d="M0 1 H5 M7 1 H12 M0 5.5 H4 M8 5.5 H12 M0 10 H5 M7 10 H12 M5 1 L7 5.5 M5 10 L7 5.5" stroke="#bdbdbd" stroke-width="1.2" fill="none"/></svg>
<div class="b" style="left:51px;top:586px;width:407px;height:28px;background:#fff;"></div>
<svg class="b" style="left:61px;top:593px;" width="14" height="12" viewBox="0 0 14 12"><path d="M1.5 6.5 L5 10 L12.5 1.5" fill="none" stroke="#f26522" stroke-width="2" opacity="0.8"/></svg>
<div class="t" style="left:79px;top:590.75px;height:20px;line-height:20px;font-size:13px;color:#000;letter-spacing:0.080px;">"main"@1 in group "main": RUNNING</div>
<svg class="b" style="left:411px;top:594px;" width="13" height="12" viewBox="0 0 13 12"><path d="M0.5 0.5 H12.5 L8 6 V11.5 L5 10 V6 Z" fill="#6e6e6e"/></svg>
<svg class="b" style="left:439px;top:598px;" width="9" height="5" viewBox="0 0 9 5"><path d="M0 0 H9 L4.5 5 Z" fill="#6e6e6e"/></svg>
<div class="b" style="left:458px;top:586px;width:1px;height:373px;background:#d1d1d1;"></div>
<div class="c" style="left:51px;top:614px;width:407px;height:311px;background:#ffffe4">
<div class="b" style="left:0px;top:0px;width:407px;height:21.5px;background:#d5d5d5;"></div>
<svg class="b" style="left:9px;top:4px;" width="12" height="12" viewBox="0 0 12 12"><path d="M1 4.5 H7.5 A3.5 3.5 0 0 1 7.5 11.5 H4.5" fill="none" stroke="#6e6e6e" stroke-width="1"/><path d="M4 1.5 L1 4.5 L4 7.5" fill="none" stroke="#6e6e6e" stroke-width="1"/></svg>
<div class="t" style="left:26px;top:0.5px;height:21px;line-height:21px;font-size:13px;color:#000;letter-spacing:-0.246px">doScan:289, ClassPathBeanDefinitionScanner<span class="i" style="position:absolute;left:263.5px;letter-spacing:0.228px">(org.springframework.context.annotation)</span></div>
<div class="t" style="left:26px;top:21.5px;height:21px;line-height:21px;font-size:13px;color:#8c8c8c;letter-spacing:-0.109px">parse:128, ComponentScanAnnotationParser<span class="i" style="position:absolute;left:263px;letter-spacing:0.228px">(org.springframework.context.annotation)</span></div>
<div class="t" style="left:26px;top:42.5px;height:21px;line-height:21px;font-size:13px;color:#8c8c8c;letter-spacing:-0.104px">doProcessConfigurationClass:295, ConfigurationClassParser<span class="i" style="position:absolute;left:351px;letter-spacing:0.228px">(org.springframework.context.annotation)</span></div>
<div class="t" style="left:26px;top:63.5px;height:21px;line-height:21px;font-size:13px;color:#8c8c8c;letter-spacing:-0.091px">processConfigurationClass:249, ConfigurationClassParser<span class="i" style="position:absolute;left:336px;letter-spacing:0.228px">(org.springframework.context.annotation)</span></div>
<div class="t" style="left:26px;top:84.5px;height:21px;line-height:21px;font-size:13px;color:#8c8c8c;letter-spacing:-0.119px">parse:206, ConfigurationClassParser<span class="i" style="position:absolute;left:214px;letter-spacing:0.228px">(org.springframework.context.annotation)</span></div>
<div class="t" style="left:26px;top:105.5px;height:21px;line-height:21px;font-size:13px;color:#8c8c8c;letter-spacing:-0.119px">parse:174, ConfigurationClassParser<span class="i" style="position:absolute;left:214px;letter-spacing:0.228px">(org.springframework.context.annotation)</span></div>
<div class="t" style="left:26px;top:126.5px;height:21px;line-height:21px;font-size:13px;color:#8c8c8c;letter-spacing:-0.093px">processConfigBeanDefinitions:331, ConfigurationClassPostProcessor<span class="i" style="position:absolute;left:400.031px;letter-spacing:0.228px">(org.springframework.context.annotation)</span></div>
<div class="t" style="left:26px;top:147.5px;height:21px;line-height:21px;font-size:13px;color:#8c8c8c;letter-spacing:-0.092px">postProcessBeanDefinitionRegistry:247, ConfigurationClassPostProcessor<span class="i" style="position:absolute;left:429.212px;letter-spacing:0.228px">(org.springframework.context.annotation)</span></div>
<div class="t" style="left:26px;top:168.5px;height:21px;line-height:21px;font-size:13px;color:#8c8c8c;letter-spacing:-0.092px">invokeBeanDefinitionRegistryPostProcessors:311, PostProcessorRegistrationDelegate<span class="i" style="position:absolute;left:495.869px;letter-spacing:0.228px">(org.springframework.context.support)</span></div>
<div class="t" style="left:26px;top:189.5px;height:21px;line-height:21px;font-size:13px;color:#8c8c8c;letter-spacing:-0.094px">invokeBeanFactoryPostProcessors:112, PostProcessorRegistrationDelegate<span class="i" style="position:absolute;left:438.215px;letter-spacing:0.228px">(org.springframework.context.support)</span></div>
<div class="t" style="left:26px;top:210.5px;height:21px;line-height:21px;font-size:13px;color:#8c8c8c;letter-spacing:-0.093px">invokeBeanFactoryPostProcessors:746, AbstractApplicationContext<span class="i" style="position:absolute;left:389.35px;letter-spacing:0.228px">(org.springframework.context.support)</span></div>
<div class="t" style="left:26px;top:231.5px;height:21px;line-height:21px;font-size:13px;color:#8c8c8c;letter-spacing:-0.009px">refresh:564, AbstractApplicationContext<span class="i" style="position:absolute;left:233px;letter-spacing:0.228px">(org.springframework.context.support)</span></div>
<div class="t" style="left:26px;top:252.5px;height:21px;line-height:21px;font-size:13px;color:#8c8c8c;letter-spacing:-0.067px">refresh:147, ServletWebServerApplicationContext<span class="i" style="position:absolute;left:288.5px;letter-spacing:0.228px">(org.springframework.boot.web.servlet.context)</span></div>
<div class="t" style="left:26px;top:273.5px;height:21px;line-height:21px;font-size:13px;color:#8c8c8c;letter-spacing:-0.006px">refresh:731, SpringApplication<span class="i" style="position:absolute;left:179px;letter-spacing:0.228px">(org.springframework.boot)</span></div>
<div class="t" style="left:26px;top:294.5px;height:21px;line-height:21px;font-size:13px;color:#8c8c8c;letter-spacing:-0.026px">refreshContext:408, SpringApplication<span class="i" style="position:absolute;left:223px;letter-spacing:0.228px">(org.springframework.boot)</span></div>
<div class="b" style="left:397px;top:0px;width:10px;height:249px;background:rgba(120,120,90,0.18);"></div>
</div>
<div class="b" style="left:51px;top:925px;width:407px;height:10px;background:#ffffe4;"></div>
<div class="b" style="left:51px;top:925px;width:207px;height:10px;background:#e6e6cd;"></div>
<div class="b" style="left:51px;top:935px;width:407px;height:22px;background:#f2f2f2;"></div>
<div class="t" style="left:59px;top:937.25px;height:20px;line-height:20px;font-size:12.5px;color:#6e6e6e;letter-spacing:-0.396px;">Switch frames from anywhere in the IDE with Ctrl+Alt+向上箭头 and Ct...</div>
<svg class="b" style="left:441px;top:942px;" width="9" height="9" viewBox="0 0 9 9"><path d="M0.5 0.5 L8.5 8.5 M8.5 0.5 L0.5 8.5" stroke="#9b9b9b" stroke-width="1"/></svg>
<div class="b" style="left:459px;top:586px;width:1440px;height:373px;background:#fff;"></div>
<div class="b" style="left:459px;top:614px;width:1440px;height:1px;background:#d1d1d1;"></div>
<div class="t" style="left:467px;top:589.8px;height:22px;line-height:22px;font-family:'Liberation Mono','Noto Sans CJK SC',monospace;font-size:12.6px;color:#a8a8a8;letter-spacing:-0.56px">Evaluate expression (Enter) or add a watch (Ctrl+Shift+Enter)</div>
<div class="b" style="left:459px;top:948px;width:1440px;height:9px;background:#e8e8e8;"></div>
<div class="c" style="left:459px;top:614px;width:1440px;height:334px;">
<div class="b" style="left:0px;top:181px;width:1440px;height:20px;background:#d5d5d5;"></div>
<svg class="b" style="left:8px;top:5px;" width="7" height="10" viewBox="0 0 7 10"><path d="M1.5 1 L5.5 5 L1.5 9" fill="none" stroke="#6e6e6e" stroke-width="1.2"/></svg>
<svg class="b" style="left:26.5px;top:4.5px;" width="11" height="11.5" viewBox="0 0 11 11.5"><path d="M0 1.1 H10 M0 4.2 H10 M0 7.3 H10 M0 10.4 H10" stroke="#f5c585" stroke-width="2.2"/></svg>
<div class="t" style="left:43px;top:0.75px;height:20px;line-height:20px;font-size:13px;letter-spacing:-0.279px;word-spacing:1.6px;"><span class="n">this</span> = <span class="g">{ClassPathBeanDefinitionScanner@6890}</span></div>
<svg class="b" style="left:8px;top:25px;" width="7" height="10" viewBox="0 0 7 10"><path d="M1.5 1 L5.5 5 L1.5 9" fill="none" stroke="#6e6e6e" stroke-width="1.2"/></svg>
<svg class="b" style="left:24.2px;top:22.7px;" width="15.6" height="15.6" viewBox="0 0 15.6 15.6"><circle cx="7.8" cy="7.8" r="6.8" fill="#f6c688"/><text x="8" y="11.1" font-family="Liberation Sans,sans-serif" font-size="11.3" text-anchor="middle" fill="#5b5346">p</text></svg>
<div class="t" style="left:43px;top:20.75px;height:20px;line-height:20px;font-size:13px;letter-spacing:-0.105px;word-spacing:1.6px;"><span class="n">basePackages</span> = <span class="g">{String[1]@6882}</span> ["com.github.tabl..."]</div>
<svg class="b" style="left:8px;top:45px;" width="7" height="10" viewBox="0 0 7 10"><path d="M1.5 1 L5.5 5 L1.5 9" fill="none" stroke="#6e6e6e" stroke-width="1.2"/></svg>
<svg class="b" style="left:26.5px;top:44.5px;" width="11" height="11.5" viewBox="0 0 11 11.5"><path d="M0 1.1 H10 M0 4.2 H10 M0 7.3 H10 M0 10.4 H10" stroke="#f5c585" stroke-width="2.2"/></svg>
<div class="t" style="left:43px;top:40.75px;height:20px;line-height:20px;font-size:13px;letter-spacing:-0.279px;word-spacing:1.6px;"><span class="n">beanDefinitions</span> = <span class="g">{LinkedHashSet@6883}</span>  size = 1</div>
<svg class="b" style="left:8px;top:65px;" width="7" height="10" viewBox="0 0 7 10"><path d="M1.5 1 L5.5 5 L1.5 9" fill="none" stroke="#6e6e6e" stroke-width="1.2"/></svg>
<svg class="b" style="left:26.5px;top:64.5px;" width="11" height="11.5" viewBox="0 0 11 11.5"><path d="M0 1.1 H10 M0 4.2 H10 M0 7.3 H10 M0 10.4 H10" stroke="#f5c585" stroke-width="2.2"/></svg>
<div class="t" style="left:43px;top:60.75px;height:20px;line-height:20px;font-size:13px;letter-spacing:-0.063px;word-spacing:1.6px;"><span class="n">basePackage</span> = <span class="s">"com.github.tablesheep233"</span></div>
<svg class="b" style="left:8px;top:85px;" width="7" height="10" viewBox="0 0 7 10"><path d="M1.5 1 L5.5 5 L1.5 9" fill="none" stroke="#6e6e6e" stroke-width="1.2"/></svg>
<svg class="b" style="left:26.5px;top:84.5px;" width="11" height="11.5" viewBox="0 0 11 11.5"><path d="M0 1.1 H10 M0 4.2 H10 M0 7.3 H10 M0 10.4 H10" stroke="#f5c585" stroke-width="2.2"/></svg>
<div class="t" style="left:43px;top:80.75px;height:20px;line-height:20px;font-size:13px;letter-spacing:-0.294px;word-spacing:1.6px;"><span class="n">candidates</span> = <span class="g">{LinkedHashSet@6885}</span>  size = 2</div>
<svg class="b" style="left:8px;top:105px;" width="7" height="10" viewBox="0 0 7 10"><path d="M1.5 1 L5.5 5 L1.5 9" fill="none" stroke="#6e6e6e" stroke-width="1.2"/></svg>
<svg class="b" style="left:26.5px;top:104.5px;" width="11" height="11.5" viewBox="0 0 11 11.5"><path d="M0 1.1 H10 M0 4.2 H10 M0 7.3 H10 M0 10.4 H10" stroke="#f5c585" stroke-width="2.2"/></svg>
<div class="t" style="left:43px;top:100.75px;height:20px;line-height:20px;font-size:13px;letter-spacing:-0.172px;word-spacing:1.6px;"><span class="bl">candidate</span> = <span class="g">{ScannedGenericBeanDefinition@7551}</span> "Generic bean: class [com.github.tablesheep233.DynamicValueHolder]; scope=refresh</div>
<svg class="b" style="left:8px;top:125px;" width="7" height="10" viewBox="0 0 7 10"><path d="M1.5 1 L5.5 5 L1.5 9" fill="none" stroke="#6e6e6e" stroke-width="1.2"/></svg>
<svg class="b" style="left:26.5px;top:124.5px;" width="11" height="11.5" viewBox="0 0 11 11.5"><path d="M0 1.1 H10 M0 4.2 H10 M0 7.3 H10 M0 10.4 H10" stroke="#f5c585" stroke-width="2.2"/></svg>
<div class="t" style="left:43px;top:120.75px;height:20px;line-height:20px;font-size:13px;letter-spacing:-0.036px;word-spacing:1.6px;"><span class="bl">scopeMetadata</span> = <span class="g">{ScopeMetadata@7552}</span></div>
<svg class="b" style="left:8px;top:145px;" width="7" height="10" viewBox="0 0 7 10"><path d="M1.5 1 L5.5 5 L1.5 9" fill="none" stroke="#6e6e6e" stroke-width="1.2"/></svg>
<svg class="b" style="left:26.5px;top:144.5px;" width="11" height="11.5" viewBox="0 0 11 11.5"><path d="M0 1.1 H10 M0 4.2 H10 M0 7.3 H10 M0 10.4 H10" stroke="#f5c585" stroke-width="2.2"/></svg>
<div class="t" style="left:43px;top:140.75px;height:20px;line-height:20px;font-size:13px;letter-spacing:-0.003px;word-spacing:1.6px;"><span class="bl">beanName</span> = <span class="s">"dynamicValueHolder"</span></div>
<svg class="b" style="left:7px;top:166.5px;" width="10" height="7" viewBox="0 0 10 7"><path d="M1 1.5 L5 5.5 L9 1.5" fill="none" stroke="#6e6e6e" stroke-width="1.2"/></svg>
<svg class="b" style="left:26.5px;top:164.5px;" width="11" height="11.5" viewBox="0 0 11 11.5"><path d="M0 1.1 H10 M0 4.2 H10 M0 7.3 H10 M0 10.4 H10" stroke="#f5c585" stroke-width="2.2"/></svg>
<div class="t" style="left:43px;top:160.75px;height:20px;line-height:20px;font-size:13px;letter-spacing:0.011px;word-spacing:1.6px;"><span class="bl">definitionHolder</span> = <span class="g">{BeanDefinitionHolder@7554}</span> "Bean definition with name 'dynamicValueHolder': Generic bean</div>
<svg class="b" style="left:26px;top:185px;" width="7" height="10" viewBox="0 0 7 10"><path d="M1.5 1 L5.5 5 L1.5 9" fill="none" stroke="#6e6e6e" stroke-width="1.2"/></svg>
<svg class="b" style="left:41.7px;top:182.7px;" width="15.6" height="15.6" viewBox="0 0 15.6 15.6"><circle cx="7.8" cy="7.8" r="6.8" fill="#f6c688"/><text x="8" y="11.1" font-family="Liberation Sans,sans-serif" font-size="11.3" text-anchor="middle" fill="#5b5346">f</text><path d="M0.5 0.5 L5 2 L2.5 5 Z" fill="#9aa7b0"/></svg>
<div class="t" style="left:61px;top:180.75px;height:20px;line-height:20px;font-size:13px;letter-spacing:-0.151px;word-spacing:1.6px;"><span class="n">beanDefinition</span> = <span class="g">{ScannedGenericBeanDefinition@7551}</span> "Generic bean: class [com.github.tablesheep233</div>
<svg class="b" style="left:26px;top:205px;" width="7" height="10" viewBox="0 0 7 10"><path d="M1.5 1 L5.5 5 L1.5 9" fill="none" stroke="#6e6e6e" stroke-width="1.2"/></svg>
<svg class="b" style="left:41.7px;top:202.7px;" width="15.6" height="15.6" viewBox="0 0 15.6 15.6"><circle cx="7.8" cy="7.8" r="6.8" fill="#f6c688"/><text x="8" y="11.1" font-family="Liberation Sans,sans-serif" font-size="11.3" text-anchor="middle" fill="#5b5346">f</text><path d="M0.5 0.5 L5 2 L2.5 5 Z" fill="#9aa7b0"/></svg>
<div class="t" style="left:61px;top:200.75px;height:20px;line-height:20px;font-size:13px;letter-spacing:0.005px;word-spacing:1.6px;"><span class="n">beanName</span> = <span class="s">"dynamicValueHolder"</span></div>
<svg class="b" style="left:41.7px;top:222.7px;" width="15.6" height="15.6" viewBox="0 0 15.6 15.6"><circle cx="7.8" cy="7.8" r="6.8" fill="#f6c688"/><text x="8" y="11.1" font-family="Liberation Sans,sans-serif" font-size="11.3" text-anchor="middle" fill="#5b5346">f</text><path d="M0.5 0.5 L5 2 L2.5 5 Z" fill="#9aa7b0"/></svg>
<div class="t" style="left:61px;top:220.75px;height:20px;line-height:20px;font-size:13px;letter-spacing:-0.231px;word-spacing:1.6px;"><span class="n">aliases</span> = null</div>
<svg class="b" style="left:8px;top:245px;" width="7" height="10" viewBox="0 0 7 10"><path d="M1.5 1 L5.5 5 L1.5 9" fill="none" stroke="#6e6e6e" stroke-width="1.2"/></svg>
<svg class="b" style="left:24px;top:246px;" width="17" height="8" viewBox="0 0 17 8"><circle cx="4" cy="4" r="3" fill="none" stroke="#97a3ac" stroke-width="1.6"/><circle cx="12.5" cy="4" r="3" fill="none" stroke="#97a3ac" stroke-width="1.6"/><path d="M7 3.5 Q8.25 2.5 9.5 3.5" fill="none" stroke="#97a3ac" stroke-width="1.1"/></svg>
<div class="t" style="left:43px;top:240.75px;height:20px;line-height:20px;font-size:13px;letter-spacing:-0.163px;word-spacing:1.6px;"><span class="n">this.registry</span> = <span class="g">{DefaultListableBeanFactory@6893}</span> "org.springframework.beans.factory.support.DefaultListableBeanFactory@6893</div>
<div class="b" style="left:31.8px;top:200.8px;width:255px;height:20.5px;border:3px solid #f3221a;border-radius:4px;"></div>
</div>
<div class="b" style="left:0px;top:958px;width:1918px;height:22px;background:#f2f2f2;border-top:1px solid #d1d1d1;"></div>
<div class="b" style="left:127px;top:958px;width:72px;height:22px;background:#c6c6c6;"></div>
<svg class="b" style="left:32px;top:963px;" width="9" height="13" viewBox="0 0 9 13"><path d="M2 1 V12 M2 8 Q7 8 7 4" fill="none" stroke="#6e6e6e" stroke-width="1.3"/><circle cx="2" cy="2" r="1.7" fill="#6e6e6e"/><circle cx="2" cy="11" r="1.7" fill="#6e6e6e"/><circle cx="7" cy="3.5" r="1.7" fill="#6e6e6e"/></svg>
<div class="t" style="left:47px;top:960.25px;height:20px;line-height:20px;font-size:13px;color:#000;letter-spacing:-0.542px;">Git</div>
<svg class="b" style="left:82px;top:964px;" width="9" height="11" viewBox="0 0 9 11"><path d="M0.5 0.5 L8.5 5.5 L0.5 10.5 Z" fill="#6e6e6e"/></svg>
<div class="t" style="left:97px;top:960.25px;height:20px;line-height:20px;font-size:13px;color:#000;letter-spacing:-0.953px;">Run</div>
<svg class="b" style="left:137px;top:962px;" width="15" height="15" viewBox="0 0 15 15"><ellipse cx="6.5" cy="8" rx="3.6" ry="4.6" fill="#6e6e6e"/><circle cx="6.5" cy="3" r="2" fill="#6e6e6e"/><path d="M1 4.5 L4 6.5 M12 4.5 L9 6.5 M0.5 8.5 H3.5 M12.5 8.5 H9.5 M1.5 13 L4 10.5 M11.5 13 L9 10.5" stroke="#6e6e6e" stroke-width="1.1"/><circle cx="11.5" cy="12" r="2.3" fill="#2bd42b"/></svg>
<div class="t" style="left:154px;top:960.25px;height:20px;line-height:20px;font-size:13px;color:#000;letter-spacing:-0.863px;">Debug</div>
<svg class="b" style="left:210px;top:964px;" width="12" height="11" viewBox="0 0 12 11"><path d="M0 1.5 H2 M4 1.5 H12 M0 5.5 H2 M4 5.5 H12 M0 9.5 H2 M4 9.5 H12" stroke="#6e6e6e" stroke-width="1.5"/></svg>
<div class="t" style="left:226px;top:960.25px;height:20px;line-height:20px;font-size:13px;color:#000;letter-spacing:-1.332px;">TODO</div>
<svg class="b" style="left:279px;top:964px;" width="11" height="11" viewBox="0 0 11 11"><circle cx="5.5" cy="5.5" r="5.3" fill="#6e6e6e"/><path d="M5.5 2.5 V6.3 M5.5 7.6 V9" stroke="#f2f2f2" stroke-width="1.5"/></svg>
<div class="t" style="left:295px;top:960.25px;height:20px;line-height:20px;font-size:13px;color:#000;letter-spacing:-0.740px;">Problems</div>
<svg class="b" style="left:365px;top:964px;" width="12" height="11" viewBox="0 0 12 11"><path d="M0.5 7 Q0.5 1.5 7 1.5 Q9.5 1.5 11.5 0 Q12 5 9.5 7.5 Q7 10 3 9 Q1.5 9.5 1 10.5 Z" fill="#6e6e6e"/></svg>
<div class="t" style="left:381px;top:960.25px;height:20px;line-height:20px;font-size:13px;color:#000;letter-spacing:-0.430px;">Spring</div>
<svg class="b" style="left:437px;top:964px;" width="12" height="11" viewBox="0 0 12 11"><rect x="0" y="0" width="12" height="11" fill="#6e6e6e"/><path d="M2 3 L5 5.5 L2 8 M6 8.5 H10" stroke="#f2f2f2" stroke-width="1.2" fill="none"/></svg>
<div class="t" style="left:453px;top:960.25px;height:20px;line-height:20px;font-size:13px;color:#000;letter-spacing:-0.578px;">Terminal</div>
<svg class="b" style="left:518px;top:963px;" width="15" height="13" viewBox="0 0 15 13"><path d="M7.5 3 L3 10.5 M7.5 3 L12 10.5" stroke="#6e6e6e" stroke-width="1.3"/><circle cx="7.5" cy="2.5" r="2.2" fill="#6e6e6e"/><circle cx="2.8" cy="10.5" r="2.2" fill="#6e6e6e"/><circle cx="12.2" cy="10.5" r="2.2" fill="#6e6e6e"/></svg>
<div class="t" style="left:536px;top:960.25px;height:20px;line-height:20px;font-size:13px;color:#000;letter-spacing:-0.564px;">Endpoints</div>
<svg class="b" style="left:611px;top:964px;" width="13" height="11" viewBox="0 0 13 11"><path d="M3 0 H10 L13 5.5 L10 11 H3 L0 5.5 Z" fill="#6e6e6e"/><path d="M5 2.8 L9 5.5 L5 8.2 Z" fill="#f2f2f2"/></svg>
<div class="t" style="left:628px;top:960.25px;height:20px;line-height:20px;font-size:13px;color:#000;letter-spacing:-1.045px;">Services</div>
<svg class="b" style="left:689px;top:963px;" width="14" height="13" viewBox="0 0 14 13"><circle cx="6" cy="6" r="5" fill="none" stroke="#6e6e6e" stroke-width="1.2"/><path d="M6 2.5 V6 H8.5" fill="none" stroke="#6e6e6e" stroke-width="1.1"/><path d="M8 6.5 L13.5 9.7 L8 13 Z" fill="#6e6e6e" stroke="#f2f2f2" stroke-width="0.8"/></svg>
<div class="t" style="left:707px;top:960.25px;height:20px;line-height:20px;font-size:13px;color:#000;letter-spacing:-0.461px;">Profiler</div>
<svg class="b" style="left:763px;top:963px;" width="13" height="13" viewBox="0 0 13 13"><path d="M1 3.5 L4 0.5 L8 2.5 L6.5 4 L12.5 11 L11 12.5 L5 5.5 L3.5 7 Z" fill="#6e6e6e"/></svg>
<div class="t" style="left:781px;top:960.25px;height:20px;line-height:20px;font-size:13px;color:#000;letter-spacing:-0.584px;">Build</div>
<svg class="b" style="left:830px;top:963px;" width="13" height="13" viewBox="0 0 13 13"><path d="M6.5 0.5 L12.5 3.5 L6.5 6.5 L0.5 3.5 Z" fill="#6e6e6e"/><path d="M0.5 6.5 L6.5 9.5 L12.5 6.5 M0.5 9.3 L6.5 12.3 L12.5 9.3" fill="none" stroke="#6e6e6e" stroke-width="1.2"/></svg>
<div class="t" style="left:846.75px;top:960.25px;height:20px;line-height:20px;font-size:13px;color:#000;letter-spacing:-0.719px;">Dependencies</div>
<div class="b" style="left:1889px;top:371px;width:10px;height:4px;background:#dcdcdc;"></div>
<div class="b" style="left:1885px;top:374.5px;width:14px;height:1.5px;background:#111;"></div>
<div class="b" style="left:865.5px;top:376px;width:1100px;height:587.5px;background:#f2f2f2;border:1px solid #c2c2c2;border-radius:9px;box-shadow:0 9px 22px 3px rgba(0,0,0,0.40),0 0 2px rgba(0,0,0,0.15);"></div>
<svg class="b" style="left:878px;top:383px;" width="16" height="16" viewBox="0 0 16 16"><rect x="0.5" y="0.5" width="15" height="15" fill="#000" stroke="#1a6cf0" stroke-width="1"/><text x="2.6" y="8.6" font-family="Liberation Sans,sans-serif" font-weight="bold" font-size="7.5" fill="#fff">IJ</text><rect x="3" y="11.3" width="6" height="1.3" fill="#fff"/></svg>
<div class="t" style="left:906.4px;top:382.45px;height:20px;line-height:20px;font-size:13px;color:#000;letter-spacing:-0.424px;">Evaluate</div>
<div class="t" style="left:878.6px;top:412.45px;height:20px;line-height:20px;font-size:13px;color:#000;letter-spacing:-0.229px;">Expression:</div>
<div class="b" style="left:881px;top:438px;width:1060px;height:24px;background:#fff;border:1px solid #c4c4c4;border-radius:3px;"></div>
<div class="t cd" style="left:887px;top:440px;"><span class="u">definitionHolder</span></div>
<div class="t" style="left:1818px;top:465.75px;height:20px;line-height:20px;font-size:12px;color:#333;letter-spacing:-0.05px;">Use Ctrl+Shift+Enter to add to Watches</div>
<div class="t" style="left:878.3px;top:487.25px;height:20px;line-height:20px;font-size:13px;color:#000;letter-spacing:-0.424px;"><span style="text-decoration:underline;text-underline-offset:1.5px">R</span>esult:</div>
<div class="b" style="left:878px;top:505px;width:1060px;height:412px;background:#fff;border:1px solid #c4c4c4;"></div>
<div class="c" style="left:879px;top:506px;width:1039px;height:410px;">
<div class="b" style="left:0px;top:20px;width:1039px;height:20px;background:#2675bf;"></div>
<svg class="b" style="left:7px;top:6px;" width="10" height="7" viewBox="0 0 10 7"><path d="M1 1.5 L5 5.5 L9 1.5" fill="none" stroke="#6e6e6e" stroke-width="1.2"/></svg>
<svg class="b" style="left:23.5px;top:6px;" width="17" height="8" viewBox="0 0 17 8"><circle cx="4" cy="4" r="3" fill="none" stroke="#97a3ac" stroke-width="1.6"/><circle cx="12.5" cy="4" r="3" fill="none" stroke="#97a3ac" stroke-width="1.6"/><path d="M7 3.5 Q8.25 2.5 9.5 3.5" fill="none" stroke="#97a3ac" stroke-width="1.1"/></svg>
<div class="t" style="left:43.5px;top:0.25px;height:20px;line-height:20px;font-size:13px;letter-spacing:-0.101px;word-spacing:1.6px;"><span class="n">result</span> = <span class="g">{BeanDefinitionHolder@7554}</span> "Bean definition with name 'dynamicValueHolder': Generic bean: class [com.github.tablesheep233.DynamicValueHolder]; scope=refresh; abstract=false</div>
<svg class="b" style="left:25px;top:26px;" width="10" height="7" viewBox="0 0 10 7"><path d="M1 1.5 L5 5.5 L9 1.5" fill="none" stroke="#fff" stroke-width="1.2"/></svg>
<svg class="b" style="left:42.2px;top:22.2px;" width="15.6" height="15.6" viewBox="0 0 15.6 15.6"><circle cx="7.8" cy="7.8" r="6.8" fill="#f6c688"/><text x="8" y="11.1" font-family="Liberation Sans,sans-serif" font-size="11.3" text-anchor="middle" fill="#5b5346">f</text><path d="M0.5 0.5 L5 2 L2.5 5 Z" fill="#9aa7b0"/></svg>
<div class="t" style="left:61.8px;top:20.25px;height:20px;line-height:20px;font-size:13px;letter-spacing:-0.128px;word-spacing:1.6px;color:#fff;">beanDefinition = {ScannedGenericBeanDefinition@7551} "Generic bean: class [com.github.tablesheep233.DynamicValueHolder]; scope=refresh; abstract=false; lazyInit=null; autowireMode=0</div>
<svg class="b" style="left:44px;top:44.5px;" width="7" height="10" viewBox="0 0 7 10"><path d="M1.5 1 L5.5 5 L1.5 9" fill="none" stroke="#6e6e6e" stroke-width="1.2"/></svg>
<svg class="b" style="left:60.2px;top:42.2px;" width="15.6" height="15.6" viewBox="0 0 15.6 15.6"><circle cx="7.8" cy="7.8" r="6.8" fill="#f6c688"/><text x="8" y="11.1" font-family="Liberation Sans,sans-serif" font-size="11.3" text-anchor="middle" fill="#5b5346">f</text><path d="M0.5 0.5 L5 2 L2.5 5 Z" fill="#9aa7b0"/></svg>
<div class="t" style="left:79.3px;top:40.25px;height:20px;line-height:20px;font-size:13px;letter-spacing:-0.032px;word-spacing:1.6px;"><span class="n">metadata</span> = <span class="g">{SimpleAnnotationMetadata@7557}</span> "com.github.tablesheep233.DynamicValueHolder"</div>
<svg class="b" style="left:60.2px;top:62.2px;" width="15.6" height="15.6" viewBox="0 0 15.6 15.6"><circle cx="7.8" cy="7.8" r="6.8" fill="#f6c688"/><text x="8" y="11.1" font-family="Liberation Sans,sans-serif" font-size="11.3" text-anchor="middle" fill="#5b5346">f</text></svg>
<div class="t" style="left:79.3px;top:60.25px;height:20px;line-height:20px;font-size:13px;letter-spacing:-0.029px;word-spacing:1.6px;"><span class="n">parentName</span> = null</div>
<svg class="b" style="left:44px;top:84.5px;" width="7" height="10" viewBox="0 0 7 10"><path d="M1.5 1 L5.5 5 L1.5 9" fill="none" stroke="#6e6e6e" stroke-width="1.2"/></svg>
<svg class="b" style="left:60.2px;top:82.2px;" width="15.6" height="15.6" viewBox="0 0 15.6 15.6"><circle cx="7.8" cy="7.8" r="6.8" fill="#f6c688"/><text x="8" y="11.1" font-family="Liberation Sans,sans-serif" font-size="11.3" text-anchor="middle" fill="#5b5346">f</text></svg>
<div class="t" style="left:79.3px;top:80.25px;height:20px;line-height:20px;font-size:13px;letter-spacing:-0.062px;word-spacing:1.6px;"><span class="n">beanClass</span> = <span class="s">"com.github.tablesheep233.DynamicValueHolder"</span></div>
<svg class="b" style="left:44px;top:104.5px;" width="7" height="10" viewBox="0 0 7 10"><path d="M1.5 1 L5.5 5 L1.5 9" fill="none" stroke="#6e6e6e" stroke-width="1.2"/></svg>
<svg class="b" style="left:60.2px;top:102.2px;" width="15.6" height="15.6" viewBox="0 0 15.6 15.6"><circle cx="7.8" cy="7.8" r="6.8" fill="#f6c688"/><text x="8" y="11.1" font-family="Liberation Sans,sans-serif" font-size="11.3" text-anchor="middle" fill="#5b5346">f</text></svg>
<div class="t" style="left:79.3px;top:100.25px;height:20px;line-height:20px;font-size:13px;letter-spacing:-0.024px;word-spacing:1.6px;"><span class="n">scope</span> = <span class="s">"refresh"</span></div>
<svg class="b" style="left:60.2px;top:122.2px;" width="15.6" height="15.6" viewBox="0 0 15.6 15.6"><circle cx="7.8" cy="7.8" r="6.8" fill="#f6c688"/><text x="8" y="11.1" font-family="Liberation Sans,sans-serif" font-size="11.3" text-anchor="middle" fill="#5b5346">f</text></svg>
<div class="t" style="left:79.3px;top:120.25px;height:20px;line-height:20px;font-size:13px;letter-spacing:-0.101px;word-spacing:1.6px;"><span class="n">abstractFlag</span> = false</div>
<svg class="b" style="left:60.2px;top:142.2px;" width="15.6" height="15.6" viewBox="0 0 15.6 15.6"><circle cx="7.8" cy="7.8" r="6.8" fill="#f6c688"/><text x="8" y="11.1" font-family="Liberation Sans,sans-serif" font-size="11.3" text-anchor="middle" fill="#5b5346">f</text></svg>
<div class="t" style="left:79.3px;top:140.25px;height:20px;line-height:20px;font-size:13px;letter-spacing:-0.121px;word-spacing:1.6px;"><span class="n">lazyInit</span> = null</div>
<svg class="b" style="left:60.2px;top:162.2px;" width="15.6" height="15.6" viewBox="0 0 15.6 15.6"><circle cx="7.8" cy="7.8" r="6.8" fill="#f6c688"/><text x="8" y="11.1" font-family="Liberation Sans,sans-serif" font-size="11.3" text-anchor="middle" fill="#5b5346">f</text></svg>
<div class="t" style="left:79.3px;top:160.25px;height:20px;line-height:20px;font-size:13px;letter-spacing:0.144px;word-spacing:1.6px;"><span class="n">autowireMode</span> = 0</div>
<svg class="b" style="left:60.2px;top:182.2px;" width="15.6" height="15.6" viewBox="0 0 15.6 15.6"><circle cx="7.8" cy="7.8" r="6.8" fill="#f6c688"/><text x="8" y="11.1" font-family="Liberation Sans,sans-serif" font-size="11.3" text-anchor="middle" fill="#5b5346">f</text></svg>
<div class="t" style="left:79.3px;top:180.25px;height:20px;line-height:20px;font-size:13px;letter-spacing:-0.154px;word-spacing:1.6px;"><span class="n">dependencyCheck</span> = 0</div>
<svg class="b" style="left:60.2px;top:202.2px;" width="15.6" height="15.6" viewBox="0 0 15.6 15.6"><circle cx="7.8" cy="7.8" r="6.8" fill="#f6c688"/><text x="8" y="11.1" font-family="Liberation Sans,sans-serif" font-size="11.3" text-anchor="middle" fill="#5b5346">f</text></svg>
<div class="t" style="left:79.3px;top:200.25px;height:20px;line-height:20px;font-size:13px;letter-spacing:-0.043px;word-spacing:1.6px;"><span class="n">dependsOn</span> = null</div>
<svg class="b" style="left:60.2px;top:222.2px;" width="15.6" height="15.6" viewBox="0 0 15.6 15.6"><circle cx="7.8" cy="7.8" r="6.8" fill="#f6c688"/><text x="8" y="11.1" font-family="Liberation Sans,sans-serif" font-size="11.3" text-anchor="middle" fill="#5b5346">f</text></svg>
<div class="t" style="left:79.3px;top:220.25px;height:20px;line-height:20px;font-size:13px;letter-spacing:0.003px;word-spacing:1.6px;"><span class="n">autowireCandidate</span> = true</div>
<svg class="b" style="left:60.2px;top:242.2px;" width="15.6" height="15.6" viewBox="0 0 15.6 15.6"><circle cx="7.8" cy="7.8" r="6.8" fill="#f6c688"/><text x="8" y="11.1" font-family="Liberation Sans,sans-serif" font-size="11.3" text-anchor="middle" fill="#5b5346">f</text></svg>
<div class="t" style="left:79.3px;top:240.25px;height:20px;line-height:20px;font-size:13px;letter-spacing:-0.015px;word-spacing:1.6px;"><span class="n">primary</span> = false</div>
<svg class="b" style="left:60.2px;top:262.2px;" width="15.6" height="15.6" viewBox="0 0 15.6 15.6"><circle cx="7.8" cy="7.8" r="6.8" fill="#f6c688"/><text x="8" y="11.1" font-family="Liberation Sans,sans-serif" font-size="11.3" text-anchor="middle" fill="#5b5346">f</text><path d="M0.5 0.5 L5 2 L2.5 5 Z" fill="#9aa7b0"/></svg>
<div class="t" style="left:79.3px;top:260.25px;height:20px;line-height:20px;font-size:13px;letter-spacing:-0.183px;word-spacing:1.6px;"><span class="n">qualifiers</span> = <span class="g">{LinkedHashMap@7560}</span>  size = 0</div>
<svg class="b" style="left:60.2px;top:282.2px;" width="15.6" height="15.6" viewBox="0 0 15.6 15.6"><circle cx="7.8" cy="7.8" r="6.8" fill="#f6c688"/><text x="8" y="11.1" font-family="Liberation Sans,sans-serif" font-size="11.3" text-anchor="middle" fill="#5b5346">f</text></svg>
<div class="t" style="left:79.3px;top:280.25px;height:20px;line-height:20px;font-size:13px;letter-spacing:-0.103px;word-spacing:1.6px;"><span class="n">instanceSupplier</span> = null</div>
<svg class="b" style="left:60.2px;top:302.2px;" width="15.6" height="15.6" viewBox="0 0 15.6 15.6"><circle cx="7.8" cy="7.8" r="6.8" fill="#f6c688"/><text x="8" y="11.1" font-family="Liberation Sans,sans-serif" font-size="11.3" text-anchor="middle" fill="#5b5346">f</text></svg>
<div class="t" style="left:79.3px;top:300.25px;height:20px;line-height:20px;font-size:13px;letter-spacing:-0.143px;word-spacing:1.6px;"><span class="n">nonPublicAccessAllowed</span> = true</div>
<svg class="b" style="left:60.2px;top:322.2px;" width="15.6" height="15.6" viewBox="0 0 15.6 15.6"><circle cx="7.8" cy="7.8" r="6.8" fill="#f6c688"/><text x="8" y="11.1" font-family="Liberation Sans,sans-serif" font-size="11.3" text-anchor="middle" fill="#5b5346">f</text></svg>
<div class="t" style="left:79.3px;top:320.25px;height:20px;line-height:20px;font-size:13px;letter-spacing:-0.013px;word-spacing:1.6px;"><span class="n">lenientConstructorResolution</span> = true</div>
<svg class="b" style="left:60.2px;top:342.2px;" width="15.6" height="15.6" viewBox="0 0 15.6 15.6"><circle cx="7.8" cy="7.8" r="6.8" fill="#f6c688"/><text x="8" y="11.1" font-family="Liberation Sans,sans-serif" font-size="11.3" text-anchor="middle" fill="#5b5346">f</text></svg>
<div class="t" style="left:79.3px;top:340.25px;height:20px;line-height:20px;font-size:13px;letter-spacing:-0.069px;word-spacing:1.6px;"><span class="n">factoryBeanName</span> = null</div>
<svg class="b" style="left:60.2px;top:362.2px;" width="15.6" height="15.6" viewBox="0 0 15.6 15.6"><circle cx="7.8" cy="7.8" r="6.8" fill="#f6c688"/><text x="8" y="11.1" font-family="Liberation Sans,sans-serif" font-size="11.3" text-anchor="middle" fill="#5b5346">f</text></svg>
<div class="t" style="left:79.3px;top:360.25px;height:20px;line-height:20px;font-size:13px;letter-spacing:0.112px;word-spacing:1.6px;"><span class="n">factoryMethodName</span> = null</div>
<svg class="b" style="left:60.2px;top:382.2px;" width="15.6" height="15.6" viewBox="0 0 15.6 15.6"><circle cx="7.8" cy="7.8" r="6.8" fill="#f6c688"/><text x="8" y="11.1" font-family="Liberation Sans,sans-serif" font-size="11.3" text-anchor="middle" fill="#5b5346">f</text></svg>
<div class="t" style="left:79.3px;top:380.25px;height:20px;line-height:20px;font-size:13px;letter-spacing:-0.000px;word-spacing:1.6px;"><span class="n">constructorArgumentValues</span> = null</div>
<svg class="b" style="left:60.2px;top:402.2px;" width="15.6" height="15.6" viewBox="0 0 15.6 15.6"><circle cx="7.8" cy="7.8" r="6.8" fill="#f6c688"/><text x="8" y="11.1" font-family="Liberation Sans,sans-serif" font-size="11.3" text-anchor="middle" fill="#5b5346">f</text></svg>
<div class="t" style="left:79.3px;top:400.25px;height:20px;line-height:20px;font-size:13px;letter-spacing:-0.250px;word-spacing:1.6px;"><span class="n">propertyValues</span> = null</div>
<div class="b" style="left:0px;top:400px;width:441px;height:10px;background:rgba(205,205,205,0.6);"></div>
</div>
<div class="b" style="left:1040.8px;top:522px;width:189.4px;height:26.7px;border:3px solid #f3221a;border-radius:4.5px;"></div>
<div class="b" style="left:952.3px;top:585.8px;width:395px;height:26.4px;border:3px solid #f3221a;border-radius:4.5px;"></div>
<div class="b" style="left:881px;top:929px;width:23px;height:23px;border-radius:50%;background:#fff;border:1px solid #c4c4c4;"></div>
<div class="t" style="left:887.2px;top:931.05px;height:20px;line-height:20px;font-size:17px;color:#5e5e5e;">?</div>
<div class="b" style="left:1860px;top:929px;width:80px;height:23px;background:#4a88c7;border:1px solid #3d75b0;border-radius:3px;"></div>
<div class="t" style="left:1872px;top:931.25px;height:20px;line-height:20px;font-size:13px;color:#fff;font-weight:bold;letter-spacing:0.1px;">E<span style="text-decoration:underline;text-underline-offset:1.5px">v</span>aluate</div>
<svg class="b" style="left:1367px;top:5px;" width="18" height="13" viewBox="0 0 18 13"><circle cx="9" cy="3.6" r="3.3" fill="#6e6e6e"/><path d="M2 12.5 Q2 7.5 9 7.5 Q16 7.5 16 12.5 Z" fill="#6e6e6e"/></svg>
<svg class="b" style="left:1386px;top:9.5px;" width="7" height="4" viewBox="0 0 7 4"><path d="M0 0 H7 L3.5 4 Z" fill="#6e6e6e"/></svg>
<div class="b" style="left:1401px;top:3px;width:1px;height:19px;background:#d1d1d1;"></div>
<svg class="b" style="left:1409px;top:3px;" width="17" height="16" viewBox="0 0 17 16"><path d="M1.5 4.5 L5 1 L10.5 3.5 L8 6 L15.5 13.5 L13.5 15.5 L6 8 L4 10 Z" fill="#59a869"/></svg>
<div class="b" style="left:1437px;top:1px;width:84px;height:21px;background:#fff;border:1px solid #c4c4c4;border-radius:4px;"></div>
<svg class="b" style="left:1446px;top:4px;" width="17" height="16" viewBox="0 0 17 16"><path d="M1 9 Q1 3 8 3 Q11 3 13.5 0.5 Q14.5 5 12 8 Q9 11 4 10 Q2.5 10.5 1.5 12 Z" fill="#b5dba6"/><circle cx="9.5" cy="10" r="3.4" fill="#f0f0f0" stroke="#b0b0b0" stroke-width="1"/><circle cx="13.3" cy="13.3" r="2.2" fill="#2bd42b"/></svg>
<div class="t" style="left:1466.5px;top:2.25px;height:20px;line-height:20px;font-size:13px;color:#000;letter-spacing:-0.047px;">Main</div>
<svg class="b" style="left:1502.5px;top:9px;" width="9" height="5" viewBox="0 0 9 5"><path d="M0 0 H9 L4.5 5 Z" fill="#6e6e6e"/></svg>
<svg class="b" style="left:1534.5px;top:5px;" width="11" height="13" viewBox="0 0 11 13"><path d="M0.5 0.5 L10.5 6.5 L0.5 12.5 Z" fill="#59a869"/></svg>
<svg class="b" style="left:1558px;top:3px;" width="17" height="17" viewBox="0 0 17 17"><ellipse cx="7.5" cy="9.5" rx="3.8" ry="4.8" fill="#59a869"/><circle cx="7.5" cy="4" r="2.2" fill="#59a869"/><path d="M1.5 5.5 L4.5 7.5 M13.5 5.5 L10.5 7.5 M0.8 10 H4 M14.2 10 H11 M2 15 L4.8 12.2 M13 15 L10.2 12.2" stroke="#59a869" stroke-width="1.3"/><circle cx="13.5" cy="14" r="2.4" fill="#2bd42b"/></svg>
<svg class="b" style="left:1584px;top:4px;" width="17" height="15" viewBox="0 0 17 15"><path d="M1 1 H11 V7.5 Q11 11.5 6 14 Q1 11.5 1 7.5 Z" fill="#6e6e6e"/><path d="M6 2 H10 V7.5 Q10 10.5 6 12.8 Z" fill="#f2f2f2"/><path d="M9.5 7 L16.5 10.7 L9.5 14.5 Z" fill="#59a869" stroke="#f2f2f2" stroke-width="0.8"/></svg>
<svg class="b" style="left:1608px;top:4px;" width="17" height="15" viewBox="0 0 17 15"><circle cx="6.5" cy="6.5" r="5.3" fill="none" stroke="#6e6e6e" stroke-width="1.3"/><path d="M6.5 2.5 V6.5 H9.5" fill="none" stroke="#6e6e6e" stroke-width="1.2"/><path d="M9 7 L16 10.7 L9 14.5 Z" fill="#59a869" stroke="#f2f2f2" stroke-width="0.8"/></svg>
<svg class="b" style="left:1630.5px;top:10px;" width="7" height="4" viewBox="0 0 7 4"><path d="M0 0 H7 L3.5 4 Z" fill="#6e6e6e"/></svg>
<div class="b" style="left:1648.5px;top:6px;width:10.5px;height:10.5px;background:#db5860;"></div>
<div class="b" style="left:1670px;top:3px;width:1px;height:19px;background:#d1d1d1;"></div>
<div class="t" style="left:1680px;top:1.75px;height:20px;line-height:20px;font-size:13px;color:#000;letter-spacing:-0.309px;">Git:</div>
<svg class="b" style="left:1711px;top:5px;" width="13" height="13" viewBox="0 0 13 13"><path d="M11.6 0.8 L4 8.4" stroke="#3592c4" stroke-width="2"/><path d="M0.8 11.2 V4.2 L7.8 11.2 Z" fill="#3592c4"/></svg>
<svg class="b" style="left:1736.5px;top:4.5px;" width="15" height="12" viewBox="0 0 15 12"><path d="M1.2 6.3 L5.3 10.2 L13 1.5" fill="none" stroke="#59a869" stroke-width="2.2"/></svg>
<svg class="b" style="left:1763px;top:5px;" width="13" height="13" viewBox="0 0 13 13"><path d="M0.8 11.2 L8.4 3.6" stroke="#59a869" stroke-width="2"/><path d="M11.6 0.6 H4.6 L11.6 7.6 Z" fill="#59a869"/></svg>
<svg class="b" style="left:1787.3px;top:3.5px;" width="15" height="15" viewBox="0 0 15 15"><circle cx="7.5" cy="7.5" r="6.3" fill="none" stroke="#c4c4c4" stroke-width="1.3"/><path d="M7.5 3.5 V7.5 L10.5 9.5" fill="none" stroke="#c4c4c4" stroke-width="1.3"/></svg>
<svg class="b" style="left:1814.5px;top:3.5px;" width="15" height="15" viewBox="0 0 15 15"><path d="M2 5.5 H9.5 A4 4 0 0 1 9.5 13.5 H5" fill="none" stroke="#555" stroke-width="1.5"/><path d="M5.5 1.5 L1.5 5.5 L5.5 9.5" fill="none" stroke="#555" stroke-width="1.5"/></svg>
<div class="b" style="left:1837px;top:3px;width:1px;height:19px;background:#d1d1d1;"></div>
<svg class="b" style="left:1846.4px;top:3.4px;" width="16" height="16" viewBox="0 0 16 16"><circle cx="6" cy="6" r="4.6" fill="none" stroke="#555" stroke-width="1.7"/><path d="M9.5 9.5 L14.5 14.5" stroke="#555" stroke-width="2"/></svg>
<svg class="b" style="left:1871.7px;top:2.5px;" width="17" height="17" viewBox="0 0 17 17"><circle cx="8.5" cy="8.5" r="8.3" fill="#f5a623"/><path d="M8.5 13 V6" stroke="#fff" stroke-width="2"/><path d="M4.5 8.5 L8.5 4 L12.5 8.5 Z" fill="#fff"/></svg>
<svg class="b" style="left:1898px;top:3px;" width="17" height="17" viewBox="0 0 17 17"><defs><linearGradient id="lg1" x1="0" y1="0" x2="1" y2="0.4"><stop offset="0" stop-color="#7fd64a"/><stop offset="0.45" stop-color="#18c3b0"/><stop offset="1" stop-color="#1f6fe0"/></linearGradient></defs><path d="M2.5 1 Q10 2 15.3 8 Q10 14 2.5 15.2 Q0.5 8 2.5 1 Z" fill="url(#lg1)"/></svg>
</body></html>
